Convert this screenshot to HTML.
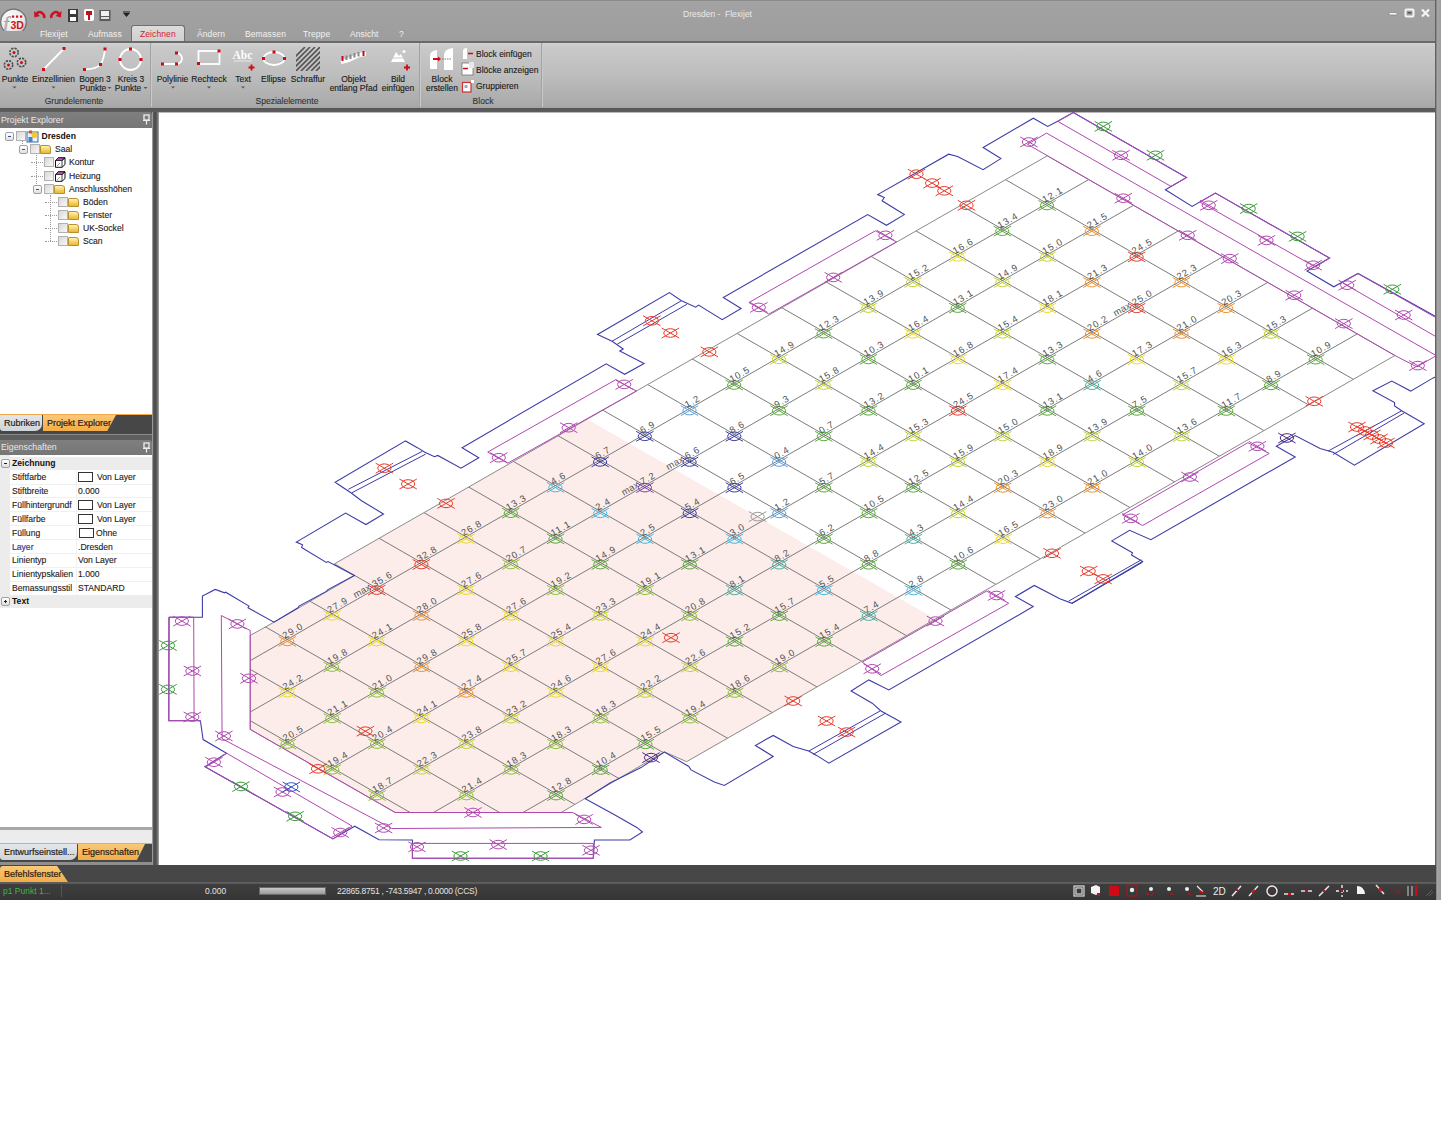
<!DOCTYPE html>
<html><head><meta charset="utf-8">
<style>
*{margin:0;padding:0;box-sizing:border-box}
html,body{width:1441px;height:1136px;background:#fff;overflow:hidden;font-family:"Liberation Sans",sans-serif}
.a{position:absolute}
#frame{left:0;top:0;width:1441px;height:900px;background:#a0a0a0}
#titlebar{left:0;top:0;width:1441px;height:41px;background:linear-gradient(#a3a3a3,#9d9d9d);border-top:1px solid #8a8a8a}
.tab{top:29px;font-size:9px;color:#f2f2f2;letter-spacing:0.1px}
#ribbon{left:0;top:41px;width:1436px;height:67px;background:linear-gradient(#d2d2d2 0,#c9c9c9 6%,#bdbdbd 50%,#aaaaaa 95%,#a4a4a4 100%);border-top:2px solid #6a6a6a}
#ribbonbot{left:0;top:108px;width:1436px;height:4px;background:linear-gradient(#555,#5e5e5e)}
.rl{font-size:9px;color:#1a1a1a;-webkit-text-stroke:0.12px #1a1a1a;text-align:center;line-height:10px}
.gl{font-size:9px;color:#333;top:96px}
.sep{top:43px;width:2px;height:64px;background:linear-gradient(90deg,#8e8e8e,#dedede)}
#rightedge{left:1435px;top:0;width:6px;height:900px;background:linear-gradient(90deg,#5c5c5c 0,#6a6a6a 1px,#a6a6a6 2px,#9c9c9c 100%)}
#splitter{left:152px;top:112px;width:7px;height:753px;background:linear-gradient(90deg,#b8b8b8 0,#5c5c5c 20%,#4a4a4a 42%,#545454 60%,#6c6c6c 75%,#a8a8a8 100%)}
#canvas{left:159px;top:112px;width:1276px;height:753px;background:linear-gradient(#9a9a9a 0,#d8d8d8 1px,#fff 1.5px);overflow:hidden}
.ph{left:0;width:152px;height:16px;background:linear-gradient(#7f7f7f,#767676);color:#e8e8e8;font-size:8.8px;line-height:16px;padding-left:1px}
.tree{font-size:9px;color:#222;line-height:13px}
.prop{font-size:9px;color:#222}
#cmdbar{left:0;top:865px;width:1436px;height:18px;background:#474747}
#status{left:0;top:883px;width:1436px;height:17px;background:linear-gradient(#3e3e3e,#353535);border-top:1px solid #5a5a5a}
.otab{height:16px;font-size:9px;color:#2a2015;-webkit-text-stroke:0.2px #2a2015;line-height:16px;padding-left:4px}
</style></head><body>
<div class="a" id="frame"></div>
<div class="a" id="titlebar"></div>

<!-- TOP BAR -->
<div class="a" style="left:0;top:1px;width:28px;height:30px">
<svg width="28" height="30" style="position:absolute;left:0;top:0">
<defs><radialGradient id="lg" cx="40%" cy="35%" r="70%"><stop offset="0" stop-color="#ffffff"/><stop offset="0.7" stop-color="#e8e8e8"/><stop offset="1" stop-color="#b8b8b8"/></radialGradient></defs>
<circle cx="13.5" cy="21" r="12.8" fill="url(#lg)" stroke="#6f6f6f" stroke-width="1.2"/>
<text x="3.5" y="29" font-family="Liberation Serif" font-style="italic" font-size="19" fill="#bdbdbd" stroke="#888" stroke-width="0.4">f</text>
<text x="10.5" y="28" font-family="Liberation Sans" font-weight="bold" font-size="10.5" fill="#d01020">3D</text>
<rect x="12" y="14.5" width="2.2" height="2.2" fill="#d01020"/><rect x="16" y="14.5" width="2.2" height="2.2" fill="#d01020"/><rect x="20" y="14.5" width="2.2" height="2.2" fill="#d01020"/>
</svg></div>
<svg class="a" style="left:30px;top:5px" width="110" height="20">
<path d="M5.5 11 Q8 5 12 8 Q15 10 14 13" fill="none" stroke="#d01020" stroke-width="2.6"/><path d="M4 6 L4.5 12.5 L10 11 Z" fill="#d01020"/>
<path d="M30 11 Q27.5 5 23.5 8 Q20.5 10 21.5 13" fill="none" stroke="#d01020" stroke-width="2.6"/><path d="M31.5 6 L31 12.5 L25.5 11 Z" fill="#d01020"/>
<rect x="38" y="4" width="10" height="13" fill="#3a3a3a"/><rect x="40" y="5" width="6" height="4" fill="#fff"/><rect x="40" y="12" width="6" height="4" fill="#fff"/>
<rect x="54" y="4" width="10" height="12" rx="2" fill="#fff"/><path d="M56 6 h6 v4 h-2 v5 h-2 v-5 h-2z" fill="#c01020"/>
<rect x="69.5" y="5" width="11" height="11" fill="#5a5a5a"/><rect x="71" y="6" width="8" height="5" fill="#f0f0f0"/><rect x="71" y="12" width="8" height="2" fill="#e0e0e0"/>
<path d="M93 8 h7 l-3.5 4z" fill="#222"/><rect x="93" y="6.5" width="7" height="1" fill="#222"/>
</svg>
<div class="a" style="left:131px;top:25px;width:54px;height:17px;background:linear-gradient(#dcdcdc,#cfcfcf);border:1px solid #707070;border-bottom:none;border-radius:3px 3px 0 0"></div>
<div class="a tab" style="left:40px;width:28px;font-size:8.5px">Flexijet</div>
<div class="a tab" style="left:88px;width:32px;font-size:8.5px">Aufmass</div>
<div class="a tab" style="left:140px;font-size:8.5px;color:#d42030">Zeichnen</div>
<div class="a tab" style="left:197px;font-size:8.5px">Ändern</div>
<div class="a tab" style="left:245px;font-size:8.5px">Bemassen</div>
<div class="a tab" style="left:303px;font-size:8.5px">Treppe</div>
<div class="a tab" style="left:350px;font-size:8.5px">Ansicht</div>
<div class="a tab" style="left:399px;font-size:8.5px">?</div>
<div class="a" style="left:683px;top:9px;font-size:8.5px;color:#eaeaea;white-space:pre">Dresden -  Flexijet</div>
<svg class="a" style="left:1385px;top:6px" width="50" height="14">
<rect x="4" y="6.5" width="8" height="2.5" rx="1" fill="#f4f4f4" stroke="#777" stroke-width="0.6"/>
<rect x="20.5" y="3.5" width="8" height="7" rx="1" fill="none" stroke="#f4f4f4" stroke-width="2"/><rect x="22.5" y="6" width="4" height="1.5" fill="#555"/>
<path d="M37 3.5 L44 10.5 M44 3.5 L37 10.5" stroke="#f4f4f4" stroke-width="2.2"/>
</svg>
<div class="a" id="ribbon"></div>

<!-- RIBBON CONTENT -->
<svg class="a" style="left:0;top:41px" width="560" height="67" viewBox="0 41 560 67">
<defs>
<g id="tgt"><circle r="4.2" fill="none" stroke="#4a4a4a" stroke-width="1.6" stroke-dasharray="2.2 1.1"/><circle r="1.5" fill="#d00a14"/></g>
</defs>
<use href="#tgt" x="14" y="52.5"/><use href="#tgt" x="8.5" y="65"/><use href="#tgt" x="21.5" y="62.5"/>
<path d="M43.5 69.5 L64 48.5" stroke="#fff" stroke-width="1.8"/>
<rect x="42" y="68" width="3" height="3" fill="#d00a14"/><rect x="62.5" y="47" width="3" height="3" fill="#d00a14"/>
<path d="M84.5 69.5 Q97 69 100.5 64.5 Q104 59 105 49" fill="none" stroke="#fff" stroke-width="1.8"/>
<rect x="83" y="68" width="3" height="3" fill="#d00a14"/><rect x="99" y="63" width="3" height="3" fill="#d00a14"/><rect x="103.5" y="47.5" width="3" height="3" fill="#d00a14"/>
<circle cx="130.5" cy="59.5" r="10.5" fill="none" stroke="#fff" stroke-width="1.8"/>
<rect x="129" y="47.5" width="3" height="3" fill="#d00a14"/><rect x="118.5" y="58" width="3" height="3" fill="#d00a14"/><rect x="139.5" y="58" width="3" height="3" fill="#d00a14"/>
<path d="M162.5 64 L176.5 64 A5.5 5.5 0 0 0 176.5 53" fill="none" stroke="#fff" stroke-width="1.8"/>
<rect x="161" y="62.5" width="3" height="3" fill="#d00a14"/><rect x="175" y="62.5" width="3" height="3" fill="#d00a14"/><rect x="175" y="51.5" width="3" height="3" fill="#d00a14"/>
<rect x="198.5" y="51" width="21" height="13" fill="none" stroke="#fff" stroke-width="1.8"/>
<rect x="197" y="62" width="3" height="3" fill="#d00a14"/><rect x="217.5" y="49.5" width="3" height="3" fill="#d00a14"/>
<text x="232.5" y="58.5" font-family="Liberation Serif" font-weight="bold" font-size="11.5" fill="#fdfdfd">Abc</text>
<rect x="234" y="60.5" width="18" height="1" fill="#e8e8e8"/>
<path d="M251.5 64.5 v6 M248.5 67.5 h6" stroke="#d00a14" stroke-width="1.8"/>
<ellipse cx="274" cy="58.5" rx="10.5" ry="6.5" fill="none" stroke="#fff" stroke-width="1.8"/>
<rect x="262" y="57" width="3" height="3" fill="#d00a14"/><rect x="272.5" y="50.5" width="3" height="3" fill="#d00a14"/><rect x="283" y="57" width="3" height="3" fill="#d00a14"/>
<clipPath id="hc"><rect x="296" y="47" width="24" height="24"/></clipPath>
<g clip-path="url(#hc)" stroke="#555" stroke-width="1.6">
<path d="M286 71 L310 47 M291 71 L315 47 M296 71 L320 47 M301 71 L325 47 M306 71 L330 47 M311 71 L335 47 M316 71 L340 47 M281 71 L305 47"/></g>
<path d="M341 62 Q350 60 355 57 Q360 54 366 54" fill="none" stroke="#fff" stroke-width="4"/>
<rect x="341.5" y="56" width="2" height="5" fill="#d00a14"/><rect x="345.5" y="55.5" width="2" height="4.5" fill="#888"/><rect x="349.5" y="54.5" width="2" height="4.5" fill="#888"/><rect x="353.5" y="53" width="2" height="4.5" fill="#888"/><rect x="357.5" y="52" width="2" height="4.5" fill="#888"/><rect x="362.5" y="51" width="2" height="5" fill="#d00a14"/>
<path d="M391 62 L396 52 L399 56 L401 54 L405 62 Z" fill="#fff"/><circle cx="404" cy="51.5" r="1.5" fill="#fff"/><rect x="392" y="57.5" width="12" height="1" fill="#ccc"/>
<path d="M407 64.5 v6 M404 67.5 h6" stroke="#d00a14" stroke-width="1.8"/>
<path d="M430 69 V56 Q430 51 437 50 V69 Z" fill="#fff"/><path d="M444 70 V55 Q444 49 453 48 V70 Z" fill="#fff"/>
<path d="M433 59 h6" stroke="#d00a14" stroke-width="2"/><path d="M438 56.5 l3 2.5 l-3 2.5z" fill="#d00a14"/><path d="M442 59 h10" stroke="#777" stroke-width="1" stroke-dasharray="1.5 1"/>
<path d="M463 59 V51 Q463 48 467 48 V59 Z" fill="#fff"/><path d="M468 53.5 h5" stroke="#d00a14" stroke-width="1.5"/>
<rect x="462" y="63" width="11" height="12" fill="#fff" stroke="#666" stroke-width="0.7"/><path d="M463 68.5 h5" stroke="#d00a14" stroke-width="1.5"/><rect x="469" y="62" width="5" height="6" fill="#e8e8e8"/>
<rect x="462.5" y="82.5" width="8.5" height="9.5" fill="#fff" stroke="#d03030" stroke-width="1.2"/><rect x="464.5" y="85" width="3" height="3" fill="#9ab"/><rect x="471" y="80" width="3" height="3" fill="#fff"/>
</svg>
<div class="a rl" style="left:0;top:73.5px;width:30px;font-size:8.5px">Punkte</div>
<div class="a rl" style="left:28px;top:73.5px;width:51px;font-size:8.5px">Einzellinien</div>
<div class="a rl" style="left:75px;top:73.5px;width:40px;font-size:8.5px">Bogen 3</div>
<div class="a rl" style="left:73px;top:83px;width:40px;font-size:8.5px">Punkte</div>
<div class="a rl" style="left:114px;top:73.5px;width:34px;font-size:8.5px">Kreis 3</div>
<div class="a rl" style="left:111px;top:83px;width:34px;font-size:8.5px">Punkte</div>
<div class="a rl" style="left:152px;top:73.5px;width:41px;font-size:8.5px">Polylinie</div>
<div class="a rl" style="left:189px;top:73.5px;width:40px;font-size:8.5px">Rechteck</div>
<div class="a rl" style="left:228px;top:73.5px;width:30px;font-size:8.5px">Text</div>
<div class="a rl" style="left:256px;top:73.5px;width:35px;font-size:8.5px">Ellipse</div>
<div class="a rl" style="left:288px;top:73.5px;width:40px;font-size:8.5px">Schraffur</div>
<div class="a rl" style="left:323px;top:73.5px;width:61px;font-size:8.5px">Objekt</div>
<div class="a rl" style="left:323px;top:83px;width:61px;font-size:8.5px">entlang Pfad</div>
<div class="a rl" style="left:378px;top:73.5px;width:40px;font-size:8.5px">Bild</div>
<div class="a rl" style="left:378px;top:83px;width:40px;font-size:8.5px">einfügen</div>
<div class="a rl" style="left:422px;top:73.5px;width:40px;font-size:8.5px">Block</div>
<div class="a rl" style="left:422px;top:83px;width:40px;font-size:8.5px">erstellen</div>
<div class="a rl" style="left:476px;top:48.5px;font-size:8.5px">Block einfügen</div>
<div class="a rl" style="left:476px;top:64.5px;font-size:8.5px">Blöcke anzeigen</div>
<div class="a rl" style="left:476px;top:80.5px;font-size:8.5px">Gruppieren</div>
<div class="a rl" style="left:34px;top:95.5px;width:80px;font-size:8.5px;color:#3a3a3a">Grundelemente</div>
<div class="a rl" style="left:237px;top:95.5px;width:100px;font-size:8.5px;color:#3a3a3a">Spezialelemente</div>
<div class="a rl" style="left:463px;top:95.5px;width:40px;font-size:8.5px;color:#3a3a3a">Block</div>
<svg class="a" style="left:0;top:84px" width="160" height="8">
<path d="M12.5 2.5 h4 l-2 2z M51.5 2.5 h4 l-2 2z M107.5 3 h4 l-2 2z M143.5 3 h4 l-2 2z" fill="#555"/>
</svg>
<svg class="a" style="left:150px;top:84px" width="100" height="8">
<path d="M21 2.5 h4 l-2 2z M57 2.5 h4 l-2 2z M91 2.5 h4 l-2 2z" fill="#555"/>
</svg>
<div class="a sep" style="left:150px"></div>
<div class="a sep" style="left:418.5px"></div>
<div class="a sep" style="left:541px"></div>
<div class="a" id="ribbonbot"></div>
<div class="a" id="rightedge"></div>

<!-- LEFT PANEL: Projekt Explorer -->
<div class="a" style="left:0;top:112px;width:152px;height:753px;background:#5a5a5a"></div>
<div class="a ph" style="top:112px;height:16px;border-radius:0 3px 0 0">Projekt Explorer</div>
<svg class="a" style="left:142px;top:114px" width="9" height="11"><rect x="2" y="1" width="5" height="5" fill="none" stroke="#eee" stroke-width="1.3"/><path d="M1 6.5 h7 M4.5 6.5 v4" stroke="#eee" stroke-width="1.2"/></svg>
<div class="a" style="left:0;top:128px;width:152px;height:286px;background:#fff"></div>
<div class="a" style="left:22px;top:141px;width:1px;height:7px;border-left:1px dotted #999"></div>
<div class="a" style="left:36px;top:155px;width:1px;height:33px;border-left:1px dotted #999"></div>
<div class="a" style="left:50px;top:195px;width:1px;height:46px;border-left:1px dotted #999"></div>
<div class="a" style="left:4.6px;top:131.7px;width:9px;height:9px;border:1px solid #a0a0a0;border-radius:2px;background:linear-gradient(#fff,#e0e0e0)"><div class="a" style="left:2px;top:3px;width:3px;height:1px;background:#3050a0"></div></div>
<div class="a" style="left:16px;top:130.7px;width:10px;height:10px;border:1px solid #b0b0b0;background:linear-gradient(135deg,#d8d8d8,#f8f8f8)"></div>
<svg class="a" style="left:26px;top:129.7px" width="13" height="13"><rect x="1" y="2" width="11" height="10" fill="#e8f0f8" stroke="#3a6aa8" stroke-width="1"/><circle cx="8.5" cy="5" r="3" fill="#f4c830"/><rect x="2.5" y="7" width="4" height="5" fill="#4a80c8"/><rect x="3" y="0.5" width="3" height="3" fill="#e84a2a"/></svg>
<div class="a" style="left:41.5px;top:129.7px;font-size:8.6px;line-height:12px;font-weight:bold;color:#111;white-space:nowrap">Dresden</div>
<div class="a" style="left:18.5px;top:145.0px;width:9px;height:9px;border:1px solid #a0a0a0;border-radius:2px;background:linear-gradient(#fff,#e0e0e0)"><div class="a" style="left:2px;top:3px;width:3px;height:1px;background:#3050a0"></div></div>
<div class="a" style="left:30px;top:144.0px;width:10px;height:10px;border:1px solid #b0b0b0;background:linear-gradient(135deg,#d8d8d8,#f8f8f8)"></div>
<div class="a" style="left:40px;top:145.0px;width:11px;height:9px;background:linear-gradient(#fff3b0,#e8b830);border:1px solid #b89030;border-radius:1px 3px 0 0"></div>
<div class="a" style="left:55px;top:143.0px;font-size:8.6px;line-height:12px;font-weight:normal;color:#222;-webkit-text-stroke:0.12px #222;white-space:nowrap">Saal</div>
<div class="a" style="left:31px;top:162.3px;width:12px;height:1px;border-top:1px dotted #999"></div>
<div class="a" style="left:44px;top:157.3px;width:10px;height:10px;border:1px solid #b0b0b0;background:linear-gradient(135deg,#d8d8d8,#f8f8f8)"></div>
<svg class="a" style="left:54.0px;top:157.3px" width="12" height="11"><path d="M1.5 3.5 L4.5 0.8 H11 V7.5 L8 10.3 H1.5 Z" fill="#fff" stroke="#111" stroke-width="1"/><path d="M1.5 3.5 L4.5 0.8 H11 L8 3.5 Z" fill="#c850b8" stroke="#111" stroke-width="0.8"/><path d="M8 3.5 V10.3 M8 3.5 L11 0.8" stroke="#111" stroke-width="0.8"/><path d="M3 9 l3 -3" stroke="#555" stroke-width="0.6"/></svg>
<div class="a" style="left:69px;top:156.3px;font-size:8.6px;line-height:12px;font-weight:normal;color:#222;-webkit-text-stroke:0.12px #222;white-space:nowrap">Kontur</div>
<div class="a" style="left:31px;top:175.5px;width:12px;height:1px;border-top:1px dotted #999"></div>
<div class="a" style="left:44px;top:170.5px;width:10px;height:10px;border:1px solid #b0b0b0;background:linear-gradient(135deg,#d8d8d8,#f8f8f8)"></div>
<svg class="a" style="left:54.0px;top:170.5px" width="12" height="11"><path d="M1.5 3.5 L4.5 0.8 H11 V7.5 L8 10.3 H1.5 Z" fill="#fff" stroke="#111" stroke-width="1"/><path d="M1.5 3.5 L4.5 0.8 H11 L8 3.5 Z" fill="#c850b8" stroke="#111" stroke-width="0.8"/><path d="M8 3.5 V10.3 M8 3.5 L11 0.8" stroke="#111" stroke-width="0.8"/><path d="M3 9 l3 -3" stroke="#555" stroke-width="0.6"/></svg>
<div class="a" style="left:69px;top:169.5px;font-size:8.6px;line-height:12px;font-weight:normal;color:#222;-webkit-text-stroke:0.12px #222;white-space:nowrap">Heizung</div>
<div class="a" style="left:32.5px;top:184.6px;width:9px;height:9px;border:1px solid #a0a0a0;border-radius:2px;background:linear-gradient(#fff,#e0e0e0)"><div class="a" style="left:2px;top:3px;width:3px;height:1px;background:#3050a0"></div></div>
<div class="a" style="left:44px;top:183.6px;width:10px;height:10px;border:1px solid #b0b0b0;background:linear-gradient(135deg,#d8d8d8,#f8f8f8)"></div>
<div class="a" style="left:54px;top:184.6px;width:11px;height:9px;background:linear-gradient(#fff3b0,#e8b830);border:1px solid #b89030;border-radius:1px 3px 0 0"></div>
<div class="a" style="left:69px;top:182.6px;font-size:8.6px;line-height:12px;font-weight:normal;color:#222;-webkit-text-stroke:0.12px #222;white-space:nowrap">Anschlusshöhen</div>
<div class="a" style="left:45px;top:201.8px;width:12px;height:1px;border-top:1px dotted #999"></div>
<div class="a" style="left:58px;top:196.8px;width:10px;height:10px;border:1px solid #b0b0b0;background:linear-gradient(135deg,#d8d8d8,#f8f8f8)"></div>
<div class="a" style="left:68px;top:197.8px;width:11px;height:9px;background:linear-gradient(#fff3b0,#e8b830);border:1px solid #b89030;border-radius:1px 3px 0 0"></div>
<div class="a" style="left:83px;top:195.8px;font-size:8.6px;line-height:12px;font-weight:normal;color:#222;-webkit-text-stroke:0.12px #222;white-space:nowrap">Böden</div>
<div class="a" style="left:45px;top:215.0px;width:12px;height:1px;border-top:1px dotted #999"></div>
<div class="a" style="left:58px;top:210.0px;width:10px;height:10px;border:1px solid #b0b0b0;background:linear-gradient(135deg,#d8d8d8,#f8f8f8)"></div>
<div class="a" style="left:68px;top:211.0px;width:11px;height:9px;background:linear-gradient(#fff3b0,#e8b830);border:1px solid #b89030;border-radius:1px 3px 0 0"></div>
<div class="a" style="left:83px;top:209.0px;font-size:8.6px;line-height:12px;font-weight:normal;color:#222;-webkit-text-stroke:0.12px #222;white-space:nowrap">Fenster</div>
<div class="a" style="left:45px;top:228.2px;width:12px;height:1px;border-top:1px dotted #999"></div>
<div class="a" style="left:58px;top:223.2px;width:10px;height:10px;border:1px solid #b0b0b0;background:linear-gradient(135deg,#d8d8d8,#f8f8f8)"></div>
<div class="a" style="left:68px;top:224.2px;width:11px;height:9px;background:linear-gradient(#fff3b0,#e8b830);border:1px solid #b89030;border-radius:1px 3px 0 0"></div>
<div class="a" style="left:83px;top:222.2px;font-size:8.6px;line-height:12px;font-weight:normal;color:#222;-webkit-text-stroke:0.12px #222;white-space:nowrap">UK-Sockel</div>
<div class="a" style="left:45px;top:241.4px;width:12px;height:1px;border-top:1px dotted #999"></div>
<div class="a" style="left:58px;top:236.4px;width:10px;height:10px;border:1px solid #b0b0b0;background:linear-gradient(135deg,#d8d8d8,#f8f8f8)"></div>
<div class="a" style="left:68px;top:237.4px;width:11px;height:9px;background:linear-gradient(#fff3b0,#e8b830);border:1px solid #b89030;border-radius:1px 3px 0 0"></div>
<div class="a" style="left:83px;top:235.4px;font-size:8.6px;line-height:12px;font-weight:normal;color:#222;-webkit-text-stroke:0.12px #222;white-space:nowrap">Scan</div>
<!-- tabs -->
<div class="a" style="left:0;top:414px;width:152px;height:20px;background:#474747;border-top:1px solid #f0a848"></div>
<div class="a otab" style="left:0;top:415px;width:42px;background:linear-gradient(#e4e7ea,#cfd4d9);border-radius:0 0 7px 3px">Rubriken</div>
<div class="a otab" style="left:43px;top:415px;width:73px;background:linear-gradient(#fbc979,#f2ac48);border-radius:0 0 7px 0;clip-path:polygon(0 0,100% 0,88% 100%,0 100%)">Projekt Explorer</div>
<div class="a" style="left:0;top:434px;width:152px;height:6px;background:#5e5e5e;border-top:1px solid #8a8a8a"></div>
<!-- Eigenschaften -->
<div class="a ph" style="top:440px;height:15px;line-height:15px;border-radius:0 3px 0 0">Eigenschaften</div><svg class="a" style="left:142px;top:442px" width="9" height="11"><rect x="2" y="1" width="5" height="5" fill="none" stroke="#eee" stroke-width="1.3"/><path d="M1 6.5 h7 M4.5 6.5 v4" stroke="#eee" stroke-width="1.2"/></svg>
<div class="a" style="left:0;top:455px;width:152px;height:375px;background:#fff"></div>
<div class="a" style="left:0;top:455px;width:10px;height:153px;background:#ececec"></div>
<div class="a" style="left:0;top:457px;width:152px;height:13px;background:#ececec"></div>
<div class="a" style="left:1px;top:459px;width:9px;height:9px;border:1px solid #a0a0a0;border-radius:2px;background:linear-gradient(#fff,#ddd)"><div class="a" style="left:2px;top:3px;width:3px;height:1px;background:#222"></div></div>
<div class="a" style="left:12px;top:457px;font-size:8.6px;line-height:12px;font-weight:bold;color:#111">Zeichnung</div>
<div class="a" style="left:10px;top:483.5px;width:142px;height:1px;background:#f0f0f0"></div>
<div class="a" style="left:12px;top:471.0px;width:63px;overflow:hidden;font-size:8.6px;line-height:12px;color:#222;-webkit-text-stroke:0.12px #222;white-space:nowrap">Stiftfarbe</div>
<div class="a" style="left:77.5px;top:472.0px;width:15px;height:10px;border:1px solid #333;background:#fff"></div>
<div class="a" style="left:97px;top:471.0px;font-size:8.6px;line-height:12px;color:#222;-webkit-text-stroke:0.12px #222;white-space:nowrap">Von Layer</div>
<div class="a" style="left:10px;top:497.4px;width:142px;height:1px;background:#f0f0f0"></div>
<div class="a" style="left:12px;top:484.9px;width:63px;overflow:hidden;font-size:8.6px;line-height:12px;color:#222;-webkit-text-stroke:0.12px #222;white-space:nowrap">Stiftbreite</div>
<div class="a" style="left:78px;top:484.9px;font-size:8.6px;line-height:12px;color:#222;-webkit-text-stroke:0.12px #222;white-space:nowrap">0.000</div>
<div class="a" style="left:10px;top:511.3px;width:142px;height:1px;background:#f0f0f0"></div>
<div class="a" style="left:12px;top:498.8px;width:63px;overflow:hidden;font-size:8.6px;line-height:12px;color:#222;-webkit-text-stroke:0.12px #222;white-space:nowrap">Füllhintergrundf</div>
<div class="a" style="left:77.5px;top:499.8px;width:15px;height:10px;border:1px solid #333;background:#fff"></div>
<div class="a" style="left:97px;top:498.8px;font-size:8.6px;line-height:12px;color:#222;-webkit-text-stroke:0.12px #222;white-space:nowrap">Von Layer</div>
<div class="a" style="left:10px;top:525.2px;width:142px;height:1px;background:#f0f0f0"></div>
<div class="a" style="left:12px;top:512.7px;width:63px;overflow:hidden;font-size:8.6px;line-height:12px;color:#222;-webkit-text-stroke:0.12px #222;white-space:nowrap">Füllfarbe</div>
<div class="a" style="left:77.5px;top:513.7px;width:15px;height:10px;border:1px solid #333;background:#fff"></div>
<div class="a" style="left:97px;top:512.7px;font-size:8.6px;line-height:12px;color:#222;-webkit-text-stroke:0.12px #222;white-space:nowrap">Von Layer</div>
<div class="a" style="left:10px;top:539.1px;width:142px;height:1px;background:#f0f0f0"></div>
<div class="a" style="left:12px;top:526.6px;width:63px;overflow:hidden;font-size:8.6px;line-height:12px;color:#222;-webkit-text-stroke:0.12px #222;white-space:nowrap">Füllung</div>
<div class="a" style="left:79px;top:527.6px;width:15px;height:10px;border:1px solid #333;background:#fff"></div>
<div class="a" style="left:96px;top:526.6px;font-size:8.6px;line-height:12px;color:#222;-webkit-text-stroke:0.12px #222;white-space:nowrap">Ohne</div>
<div class="a" style="left:10px;top:553.0px;width:142px;height:1px;background:#f0f0f0"></div>
<div class="a" style="left:12px;top:540.5px;width:63px;overflow:hidden;font-size:8.6px;line-height:12px;color:#3a3a90;-webkit-text-stroke:0.2px #3a3a90;white-space:nowrap">Layer</div>
<div class="a" style="left:78px;top:540.5px;font-size:8.6px;line-height:12px;color:#222;-webkit-text-stroke:0.12px #222;white-space:nowrap">.Dresden</div>
<div class="a" style="left:10px;top:566.9px;width:142px;height:1px;background:#f0f0f0"></div>
<div class="a" style="left:12px;top:554.4px;width:63px;overflow:hidden;font-size:8.6px;line-height:12px;color:#222;-webkit-text-stroke:0.12px #222;white-space:nowrap">Linientyp</div>
<div class="a" style="left:78px;top:554.4px;font-size:8.6px;line-height:12px;color:#222;-webkit-text-stroke:0.12px #222;white-space:nowrap">Von Layer</div>
<div class="a" style="left:10px;top:580.8px;width:142px;height:1px;background:#f0f0f0"></div>
<div class="a" style="left:12px;top:568.3px;width:63px;overflow:hidden;font-size:8.6px;line-height:12px;color:#222;-webkit-text-stroke:0.12px #222;white-space:nowrap">Linientypskalien</div>
<div class="a" style="left:78px;top:568.3px;font-size:8.6px;line-height:12px;color:#222;-webkit-text-stroke:0.12px #222;white-space:nowrap">1.000</div>
<div class="a" style="left:10px;top:594.7px;width:142px;height:1px;background:#f0f0f0"></div>
<div class="a" style="left:12px;top:582.2px;width:63px;overflow:hidden;font-size:8.6px;line-height:12px;color:#222;-webkit-text-stroke:0.12px #222;white-space:nowrap">Bemassungsstil</div>
<div class="a" style="left:78px;top:582.2px;font-size:8.6px;line-height:12px;color:#222;-webkit-text-stroke:0.12px #222;white-space:nowrap">STANDARD</div>
<div class="a" style="left:76px;top:470px;width:1px;height:125px;background:#f2f2f2"></div>
<div class="a" style="left:0;top:595px;width:152px;height:13px;background:#ececec"></div>
<div class="a" style="left:1px;top:597px;width:9px;height:9px;border:1px solid #a0a0a0;border-radius:2px;background:linear-gradient(#fff,#ddd)"><div class="a" style="left:2px;top:3px;width:3px;height:1px;background:#222"></div><div class="a" style="left:3px;top:2px;width:1px;height:3px;background:#222"></div></div>
<div class="a" style="left:12px;top:595px;font-size:8.6px;line-height:12px;font-weight:bold;color:#111">Text</div>
<div class="a" style="left:0;top:827px;width:152px;height:3px;background:#a8a8a8"></div>
<div class="a" style="left:0;top:830px;width:152px;height:13px;background:#ececec"></div>
<div class="a" style="left:0;top:843px;width:152px;height:20px;background:#474747;border-top:1px solid #f0a848"></div>
<div class="a otab" style="left:0;top:844px;width:77px;background:linear-gradient(#e4e7ea,#cfd4d9);border-radius:0 0 7px 3px">Entwurfseinstell...</div>
<div class="a otab" style="left:78px;top:844px;width:67px;background:linear-gradient(#fbc979,#f2ac48);clip-path:polygon(0 0,100% 0,88% 100%,0 100%)">Eigenschaften</div>
<div class="a" style="left:0;top:862px;width:152px;height:3px;background:#8e8e8e"></div>
<div class="a" id="splitter"></div>
<div class="a" id="canvas"><svg class="a" style="left:0;top:0" width="1276" height="753" viewBox="159 112 1276 753">
<defs><clipPath id="gc"><polygon points="250.2,635.5 274.0,622.2 354.4,575.6 334.2,564.0 1047.3,155.8 1394.9,355.5 686.6,761.7 664.3,751.8 561.2,812.5 395.2,812.5 250.2,729.4"/></clipPath></defs>
<polygon points="250.2,635.5 274.0,622.2 354.4,575.6 334.2,564.0 587.6,419.4 935.5,619.1 686.6,761.7 664.3,751.8 561.2,812.5 395.2,812.5 250.2,729.4" fill="#fcecea"/>
<g clip-path="url(#gc)"><path d="M-70.4 741.8L1046.8 100.8M-25.6 767.5L1091.6 126.5M19.2 793.2L1136.4 152.2M63.9 818.9L1181.2 177.9M108.7 844.6L1226.0 203.6M153.5 870.3L1270.7 229.3M198.3 896.0L1315.5 255.0M243.1 921.7L1360.3 280.7M287.8 947.4L1405.1 306.4M332.6 973.1L1449.9 332.1M377.4 998.8L1494.6 357.8M-115.1 767.5L377.5 1050.2M-70.4 741.8L422.2 1024.5M-25.7 716.2L466.9 998.9M19.0 690.6L511.6 973.3M63.7 664.9L556.2 947.6M108.4 639.3L600.9 922.0M153.1 613.6L645.6 896.3M197.7 588.0L690.3 870.7M242.4 562.4L735.0 845.1M287.1 536.7L779.7 819.4M331.8 511.1L824.4 793.8M376.5 485.4L869.1 768.1M421.2 459.8L913.8 742.5M465.9 434.2L958.5 716.9M510.6 408.5L1003.1 691.2M555.3 382.9L1047.8 665.6M600.0 357.2L1092.5 639.9M644.6 331.6L1137.2 614.3M689.3 306.0L1181.9 588.7M734.0 280.3L1226.6 563.0M778.7 254.7L1271.3 537.4M823.4 229.0L1316.0 511.7M868.1 203.4L1360.7 486.1M912.8 177.8L1405.4 460.5M957.5 152.1L1450.0 434.8M1002.2 126.5L1494.7 409.2" stroke="#7c7c7c" stroke-width="1" fill="none"/></g>
<polygon points="250.2,635.5 274.0,622.2 354.4,575.6 334.2,564.0 1047.3,155.8 1394.9,355.5 686.6,761.7 664.3,751.8 561.2,812.5 395.2,812.5 250.2,729.4" fill="none" stroke="#8a8a8a" stroke-width="1"/>
<polyline points="169.1,617.2 202.4,617.2 202.4,596.1 215.2,589.4 224.6,592.8 225.7,592.2 249.0,606.1 248.0,607.8 274.0,622.2 298.0,607.8 299.0,606.1 326.3,591.4 328.0,589.6 354.4,575.6 328.0,561.5 326.3,562.4 301.6,547.4 302.5,544.8 296.3,542.1 345.6,513.1 365.9,524.5 383.5,514.0 361.5,500.7 350.9,492.8 335.1,482.3 405.5,440.9 417.8,447.9 424.9,452.3 434.5,456.7 437.7,455.4 461.0,468.2 478.8,457.7 462.1,447.7 606.2,363.8 624.7,374.3 644.1,363.6 619.8,350.9 623.2,349.0 612.1,341.2 597.5,334.4 669.4,292.6 681.1,300.4 695.6,307.2 698.6,305.1 722.2,319.6 741.1,308.5 723.3,297.4 867.7,214.6 886.5,225.3 904.3,214.6 882.1,200.8 884.3,197.5 877.7,194.6 948.7,154.2 957.6,156.4 983.1,169.7 1000.9,158.6 983.1,147.5 1033.3,118.2 1047.7,126.4 1057.7,121.3 1073.3,112.5 1186.5,177.5 1165.4,189.7 1192.1,206.4 1215.4,193.1 1329.6,258.1 1307.0,270.9 1333.8,286.8 1358.0,273.5 1440.0,318.8 1440.0,374.6 1433.2,377.9 1410.7,391.1 1391.8,381.0 1372.9,390.7 1394.6,402.5 1394.6,406.0 1401.7,410.8 1424.2,423.8 1354.4,465.2 1333.1,452.2 1320.1,448.6 1295.2,435.6 1276.3,446.3 1295.2,456.9 1150.9,539.7 1129.6,530.3 1111.8,540.9 1132.5,552.8 1131.5,555.0 1142.6,561.4 1072.0,603.3 1059.8,598.8 1034.3,585.5 1015.4,596.6 1033.2,606.6 888.8,689.9 868.8,679.9 851.1,691.0 872.2,703.2 881.0,711.0 901.0,722.1 828.9,763.2 816.6,755.4 808.7,751.0 793.2,746.5 773.2,735.4 755.4,745.4 773.2,756.5 724.3,785.4 714.3,782.1 691.0,769.9 688.8,766.5 664.4,752.1 641.0,767.6 610.4,782.7 585.2,798.8 612.7,813.7 636.8,827.4 642.5,832.0 629.9,840.0 594.4,840.0 593.3,858.3 412.4,858.3 412.4,840.0 379.0,839.8 354.7,826.2 333.0,838.9 204.9,766.7 226.6,753.2 203.1,739.6 200.4,720.7 168.8,720.7 169.1,617.2" fill="none" stroke="#3c3ca8" stroke-width="1.1"/>
<polygon points="168.8,617.2 193.7,617.2 194.1,720.7 168.8,720.7" fill="none" stroke="#b048b0" stroke-width="1"/>
<polygon points="221.3,615.5 250.2,630.5 250.2,729.4 395.2,812.5 572.7,812.5 601.3,827.4 391.8,828.5 222.1,738.7" fill="none" stroke="#b048b0" stroke-width="1"/>
<polygon points="205.0,766.7 226.6,753.2 352.0,826.0 333.0,838.9" fill="none" stroke="#b048b0" stroke-width="1"/>
<polygon points="412.4,843.4 593.3,843.4 593.3,858.3 412.4,858.3" fill="none" stroke="#b048b0" stroke-width="1"/>
<polygon points="487.7,452.1 615.4,379.9 636.5,391.0 507.7,463.2" fill="none" stroke="#b048b0" stroke-width="1"/>
<polygon points="748.9,302.5 875.4,230.8 896.5,241.9 768.8,314.1" fill="none" stroke="#b048b0" stroke-width="1"/>
<polygon points="1057.7,121.3 1073.3,112.5 1186.5,177.5 1171.0,186.4" fill="none" stroke="#b048b0" stroke-width="1"/>
<polygon points="1027.5,144.3 1046.6,133.1 1440.0,357.8 1440.0,353.5 1416.9,366.9 1394.9,355.5" fill="none" stroke="#b048b0" stroke-width="1"/>
<polygon points="1199.9,202.0 1215.4,193.1 1329.6,258.1 1315.4,267.0" fill="none" stroke="#b048b0" stroke-width="1"/>
<polygon points="1342.2,282.6 1358.0,273.5 1440.0,320.0 1440.0,339.0" fill="none" stroke="#b048b0" stroke-width="1"/>
<polygon points="1122.5,514.9 1247.9,442.7 1269.2,453.4 1142.6,525.5" fill="none" stroke="#b048b0" stroke-width="1"/>
<polygon points="862.2,662.1 986.5,591.1 1008.7,603.3 881.0,675.5" fill="none" stroke="#b048b0" stroke-width="1"/>
<path d="M348.3 489.3L422.2 451.4" stroke="#3c3ca8" stroke-width="1"/>
<path d="M351.8 492.8L425.7 454.1" stroke="#3c3ca8" stroke-width="1"/>
<path d="M612.1 341.2L681.1 300.9" stroke="#3c3ca8" stroke-width="1"/>
<path d="M617.4 344.1L686.9 304.3" stroke="#3c3ca8" stroke-width="1"/>
<path d="M1328.3 451.0L1401.7 410.8" stroke="#3c3ca8" stroke-width="1"/>
<path d="M1333.1 454.5L1404.0 413.1" stroke="#3c3ca8" stroke-width="1"/>
<path d="M1068.7 601.1L1141.4 559.8" stroke="#3c3ca8" stroke-width="1"/>
<path d="M1072.0 603.3L1142.6 562.2" stroke="#3c3ca8" stroke-width="1"/>
<path d="M808.9 751.0L880.0 711.0" stroke="#3c3ca8" stroke-width="1"/>
<path d="M813.3 754.3L885.5 713.2" stroke="#3c3ca8" stroke-width="1"/>
<ellipse cx="287.3" cy="641.4" rx="6.6" ry="4.3" fill="none" stroke="#f0902a" stroke-width="1"/><path d="M278.6 646.4L296.0 636.4M278.6 636.4L296.0 646.4" stroke="#f0902a" stroke-width="1"/>
<ellipse cx="332.0" cy="615.8" rx="6.6" ry="4.3" fill="none" stroke="#e8dc28" stroke-width="1"/><path d="M323.3 620.7L340.7 610.8M323.3 610.8L340.7 620.7" stroke="#e8dc28" stroke-width="1"/>
<ellipse cx="376.7" cy="590.1" rx="6.6" ry="4.3" fill="none" stroke="#e83a2a" stroke-width="1"/><path d="M368.0 595.1L385.4 585.1M368.0 585.1L385.4 595.1" stroke="#e83a2a" stroke-width="1"/>
<ellipse cx="421.4" cy="564.5" rx="6.6" ry="4.3" fill="none" stroke="#e83a2a" stroke-width="1"/><path d="M412.7 569.5L430.0 559.5M412.7 559.5L430.0 569.5" stroke="#e83a2a" stroke-width="1"/>
<ellipse cx="466.1" cy="538.8" rx="6.6" ry="4.3" fill="none" stroke="#e8dc28" stroke-width="1"/><path d="M457.4 543.8L474.7 533.9M457.4 533.9L474.7 543.8" stroke="#e8dc28" stroke-width="1"/>
<ellipse cx="510.8" cy="513.2" rx="6.6" ry="4.3" fill="none" stroke="#5aa83a" stroke-width="1"/><path d="M502.1 518.2L519.4 508.2M502.1 508.2L519.4 518.2" stroke="#5aa83a" stroke-width="1"/>
<ellipse cx="555.4" cy="487.6" rx="6.6" ry="4.3" fill="none" stroke="#48b8e0" stroke-width="1"/><path d="M546.8 492.5L564.1 482.6M546.8 482.6L564.1 492.5" stroke="#48b8e0" stroke-width="1"/>
<ellipse cx="600.1" cy="461.9" rx="6.6" ry="4.3" fill="none" stroke="#3a3aa0" stroke-width="1"/><path d="M591.5 466.9L608.8 456.9M591.5 456.9L608.8 466.9" stroke="#3a3aa0" stroke-width="1"/>
<ellipse cx="644.8" cy="436.3" rx="6.6" ry="4.3" fill="none" stroke="#3a3aa0" stroke-width="1"/><path d="M636.1 441.3L653.5 431.3M636.1 431.3L653.5 441.3" stroke="#3a3aa0" stroke-width="1"/>
<ellipse cx="689.5" cy="410.6" rx="6.6" ry="4.3" fill="none" stroke="#5aa0e0" stroke-width="1"/><path d="M680.8 415.6L698.2 405.7M680.8 405.7L698.2 415.6" stroke="#5aa0e0" stroke-width="1"/>
<ellipse cx="734.2" cy="385.0" rx="6.6" ry="4.3" fill="none" stroke="#5aa83a" stroke-width="1"/><path d="M725.5 390.0L742.9 380.0M725.5 380.0L742.9 390.0" stroke="#5aa83a" stroke-width="1"/>
<ellipse cx="778.9" cy="359.4" rx="6.6" ry="4.3" fill="none" stroke="#c2d434" stroke-width="1"/><path d="M770.2 364.3L787.6 354.4M770.2 354.4L787.6 364.3" stroke="#c2d434" stroke-width="1"/>
<ellipse cx="823.6" cy="333.7" rx="6.6" ry="4.3" fill="none" stroke="#5aa83a" stroke-width="1"/><path d="M814.9 338.7L832.3 328.7M814.9 328.7L832.3 338.7" stroke="#5aa83a" stroke-width="1"/>
<ellipse cx="868.3" cy="308.1" rx="6.6" ry="4.3" fill="none" stroke="#c2d434" stroke-width="1"/><path d="M859.6 313.1L876.9 303.1M859.6 303.1L876.9 313.1" stroke="#c2d434" stroke-width="1"/>
<ellipse cx="913.0" cy="282.4" rx="6.6" ry="4.3" fill="none" stroke="#c2d434" stroke-width="1"/><path d="M904.3 287.4L921.6 277.5M904.3 277.5L921.6 287.4" stroke="#c2d434" stroke-width="1"/>
<ellipse cx="957.6" cy="256.8" rx="6.6" ry="4.3" fill="none" stroke="#e8dc28" stroke-width="1"/><path d="M949.0 261.8L966.3 251.8M949.0 251.8L966.3 261.8" stroke="#e8dc28" stroke-width="1"/>
<ellipse cx="1002.3" cy="231.2" rx="6.6" ry="4.3" fill="none" stroke="#5aa83a" stroke-width="1"/><path d="M993.7 236.1L1011.0 226.2M993.7 226.2L1011.0 236.1" stroke="#5aa83a" stroke-width="1"/>
<ellipse cx="1047.0" cy="205.5" rx="6.6" ry="4.3" fill="none" stroke="#5aa83a" stroke-width="1"/><path d="M1038.4 210.5L1055.7 200.5M1038.4 200.5L1055.7 210.5" stroke="#5aa83a" stroke-width="1"/>
<ellipse cx="287.4" cy="692.7" rx="6.6" ry="4.3" fill="none" stroke="#e8dc28" stroke-width="1"/><path d="M278.7 697.7L296.1 687.8M278.7 687.8L296.1 697.7" stroke="#e8dc28" stroke-width="1"/>
<ellipse cx="332.1" cy="667.1" rx="6.6" ry="4.3" fill="none" stroke="#8cc03a" stroke-width="1"/><path d="M323.4 672.1L340.8 662.1M323.4 662.1L340.8 672.1" stroke="#8cc03a" stroke-width="1"/>
<ellipse cx="376.8" cy="641.5" rx="6.6" ry="4.3" fill="none" stroke="#e8dc28" stroke-width="1"/><path d="M368.1 646.4L385.4 636.5M368.1 636.5L385.4 646.4" stroke="#e8dc28" stroke-width="1"/>
<ellipse cx="421.5" cy="615.8" rx="6.6" ry="4.3" fill="none" stroke="#f0902a" stroke-width="1"/><path d="M412.8 620.8L430.1 610.8M412.8 610.8L430.1 620.8" stroke="#f0902a" stroke-width="1"/>
<ellipse cx="466.1" cy="590.2" rx="6.6" ry="4.3" fill="none" stroke="#e8dc28" stroke-width="1"/><path d="M457.5 595.2L474.8 585.2M457.5 585.2L474.8 595.2" stroke="#e8dc28" stroke-width="1"/>
<ellipse cx="510.8" cy="564.5" rx="6.6" ry="4.3" fill="none" stroke="#8cc03a" stroke-width="1"/><path d="M502.2 569.5L519.5 559.6M502.2 559.6L519.5 569.5" stroke="#8cc03a" stroke-width="1"/>
<ellipse cx="555.5" cy="538.9" rx="6.6" ry="4.3" fill="none" stroke="#5aa83a" stroke-width="1"/><path d="M546.9 543.9L564.2 533.9M546.9 533.9L564.2 543.9" stroke="#5aa83a" stroke-width="1"/>
<ellipse cx="600.2" cy="513.3" rx="6.6" ry="4.3" fill="none" stroke="#48b8e0" stroke-width="1"/><path d="M591.5 518.2L608.9 508.3M591.5 508.3L608.9 518.2" stroke="#48b8e0" stroke-width="1"/>
<ellipse cx="644.9" cy="487.6" rx="6.6" ry="4.3" fill="none" stroke="#7a3aa8" stroke-width="1"/><path d="M636.2 492.6L653.6 482.6M636.2 482.6L653.6 492.6" stroke="#7a3aa8" stroke-width="1"/>
<ellipse cx="689.6" cy="462.0" rx="6.6" ry="4.3" fill="none" stroke="#3a3aa0" stroke-width="1"/><path d="M680.9 467.0L698.3 457.0M680.9 457.0L698.3 467.0" stroke="#3a3aa0" stroke-width="1"/>
<ellipse cx="734.3" cy="436.3" rx="6.6" ry="4.3" fill="none" stroke="#3a3aa0" stroke-width="1"/><path d="M725.6 441.3L743.0 431.4M725.6 431.4L743.0 441.3" stroke="#3a3aa0" stroke-width="1"/>
<ellipse cx="779.0" cy="410.7" rx="6.6" ry="4.3" fill="none" stroke="#5aa83a" stroke-width="1"/><path d="M770.3 415.7L787.7 405.7M770.3 405.7L787.7 415.7" stroke="#5aa83a" stroke-width="1"/>
<ellipse cx="823.7" cy="385.1" rx="6.6" ry="4.3" fill="none" stroke="#c2d434" stroke-width="1"/><path d="M815.0 390.0L832.3 380.1M815.0 380.1L832.3 390.0" stroke="#c2d434" stroke-width="1"/>
<ellipse cx="868.4" cy="359.4" rx="6.6" ry="4.3" fill="none" stroke="#5aa83a" stroke-width="1"/><path d="M859.7 364.4L877.0 354.4M859.7 354.4L877.0 364.4" stroke="#5aa83a" stroke-width="1"/>
<ellipse cx="913.0" cy="333.8" rx="6.6" ry="4.3" fill="none" stroke="#e8dc28" stroke-width="1"/><path d="M904.4 338.8L921.7 328.8M904.4 328.8L921.7 338.8" stroke="#e8dc28" stroke-width="1"/>
<ellipse cx="957.7" cy="308.1" rx="6.6" ry="4.3" fill="none" stroke="#5aa83a" stroke-width="1"/><path d="M949.1 313.1L966.4 303.2M949.1 303.2L966.4 313.1" stroke="#5aa83a" stroke-width="1"/>
<ellipse cx="1002.4" cy="282.5" rx="6.6" ry="4.3" fill="none" stroke="#c2d434" stroke-width="1"/><path d="M993.8 287.5L1011.1 277.5M993.8 277.5L1011.1 287.5" stroke="#c2d434" stroke-width="1"/>
<ellipse cx="1047.1" cy="256.9" rx="6.6" ry="4.3" fill="none" stroke="#c2d434" stroke-width="1"/><path d="M1038.4 261.8L1055.8 251.9M1038.4 251.9L1055.8 261.8" stroke="#c2d434" stroke-width="1"/>
<ellipse cx="1091.8" cy="231.2" rx="6.6" ry="4.3" fill="none" stroke="#f0902a" stroke-width="1"/><path d="M1083.1 236.2L1100.5 226.2M1083.1 226.2L1100.5 236.2" stroke="#f0902a" stroke-width="1"/>
<ellipse cx="287.5" cy="744.1" rx="6.6" ry="4.3" fill="none" stroke="#8cc03a" stroke-width="1"/><path d="M278.8 749.1L296.2 739.1M278.8 739.1L296.2 749.1" stroke="#8cc03a" stroke-width="1"/>
<ellipse cx="332.2" cy="718.4" rx="6.6" ry="4.3" fill="none" stroke="#8cc03a" stroke-width="1"/><path d="M323.5 723.4L340.8 713.5M323.5 713.5L340.8 723.4" stroke="#8cc03a" stroke-width="1"/>
<ellipse cx="376.9" cy="692.8" rx="6.6" ry="4.3" fill="none" stroke="#8cc03a" stroke-width="1"/><path d="M368.2 697.8L385.5 687.8M368.2 687.8L385.5 697.8" stroke="#8cc03a" stroke-width="1"/>
<ellipse cx="421.6" cy="667.2" rx="6.6" ry="4.3" fill="none" stroke="#f0902a" stroke-width="1"/><path d="M412.9 672.1L430.2 662.2M412.9 662.2L430.2 672.1" stroke="#f0902a" stroke-width="1"/>
<ellipse cx="466.2" cy="641.5" rx="6.6" ry="4.3" fill="none" stroke="#e8dc28" stroke-width="1"/><path d="M457.6 646.5L474.9 636.5M457.6 636.5L474.9 646.5" stroke="#e8dc28" stroke-width="1"/>
<ellipse cx="510.9" cy="615.9" rx="6.6" ry="4.3" fill="none" stroke="#e8dc28" stroke-width="1"/><path d="M502.3 620.9L519.6 610.9M502.3 610.9L519.6 620.9" stroke="#e8dc28" stroke-width="1"/>
<ellipse cx="555.6" cy="590.2" rx="6.6" ry="4.3" fill="none" stroke="#8cc03a" stroke-width="1"/><path d="M546.9 595.2L564.3 585.3M546.9 585.3L564.3 595.2" stroke="#8cc03a" stroke-width="1"/>
<ellipse cx="600.3" cy="564.6" rx="6.6" ry="4.3" fill="none" stroke="#5aa83a" stroke-width="1"/><path d="M591.6 569.6L609.0 559.6M591.6 559.6L609.0 569.6" stroke="#5aa83a" stroke-width="1"/>
<ellipse cx="645.0" cy="539.0" rx="6.6" ry="4.3" fill="none" stroke="#48b8e0" stroke-width="1"/><path d="M636.3 543.9L653.7 534.0M636.3 534.0L653.7 543.9" stroke="#48b8e0" stroke-width="1"/>
<ellipse cx="689.7" cy="513.3" rx="6.6" ry="4.3" fill="none" stroke="#3a3aa0" stroke-width="1"/><path d="M681.0 518.3L698.4 508.3M681.0 508.3L698.4 518.3" stroke="#3a3aa0" stroke-width="1"/>
<ellipse cx="734.4" cy="487.7" rx="6.6" ry="4.3" fill="none" stroke="#3a3aa0" stroke-width="1"/><path d="M725.7 492.7L743.1 482.7M725.7 482.7L743.1 492.7" stroke="#3a3aa0" stroke-width="1"/>
<ellipse cx="779.1" cy="462.0" rx="6.6" ry="4.3" fill="none" stroke="#5aa0e0" stroke-width="1"/><path d="M770.4 467.0L787.7 457.1M770.4 457.1L787.7 467.0" stroke="#5aa0e0" stroke-width="1"/>
<ellipse cx="823.8" cy="436.4" rx="6.6" ry="4.3" fill="none" stroke="#5aa83a" stroke-width="1"/><path d="M815.1 441.4L832.4 431.4M815.1 431.4L832.4 441.4" stroke="#5aa83a" stroke-width="1"/>
<ellipse cx="868.5" cy="410.8" rx="6.6" ry="4.3" fill="none" stroke="#5aa83a" stroke-width="1"/><path d="M859.8 415.7L877.1 405.8M859.8 405.8L877.1 415.7" stroke="#5aa83a" stroke-width="1"/>
<ellipse cx="913.1" cy="385.1" rx="6.6" ry="4.3" fill="none" stroke="#5aa83a" stroke-width="1"/><path d="M904.5 390.1L921.8 380.1M904.5 380.1L921.8 390.1" stroke="#5aa83a" stroke-width="1"/>
<ellipse cx="957.8" cy="359.5" rx="6.6" ry="4.3" fill="none" stroke="#e8dc28" stroke-width="1"/><path d="M949.2 364.5L966.5 354.5M949.2 354.5L966.5 364.5" stroke="#e8dc28" stroke-width="1"/>
<ellipse cx="1002.5" cy="333.8" rx="6.6" ry="4.3" fill="none" stroke="#c2d434" stroke-width="1"/><path d="M993.8 338.8L1011.2 328.9M993.8 328.9L1011.2 338.8" stroke="#c2d434" stroke-width="1"/>
<ellipse cx="1047.2" cy="308.2" rx="6.6" ry="4.3" fill="none" stroke="#e8dc28" stroke-width="1"/><path d="M1038.5 313.2L1055.9 303.2M1038.5 303.2L1055.9 313.2" stroke="#e8dc28" stroke-width="1"/>
<ellipse cx="1091.9" cy="282.6" rx="6.6" ry="4.3" fill="none" stroke="#f0902a" stroke-width="1"/><path d="M1083.2 287.5L1100.6 277.6M1083.2 277.6L1100.6 287.5" stroke="#f0902a" stroke-width="1"/>
<ellipse cx="1136.6" cy="256.9" rx="6.6" ry="4.3" fill="none" stroke="#e83a2a" stroke-width="1"/><path d="M1127.9 261.9L1145.3 251.9M1127.9 251.9L1145.3 261.9" stroke="#e83a2a" stroke-width="1"/>
<ellipse cx="332.3" cy="769.8" rx="6.6" ry="4.3" fill="none" stroke="#8cc03a" stroke-width="1"/><path d="M323.6 774.8L340.9 764.8M323.6 764.8L340.9 774.8" stroke="#8cc03a" stroke-width="1"/>
<ellipse cx="377.0" cy="744.1" rx="6.6" ry="4.3" fill="none" stroke="#8cc03a" stroke-width="1"/><path d="M368.3 749.1L385.6 739.2M368.3 739.2L385.6 749.1" stroke="#8cc03a" stroke-width="1"/>
<ellipse cx="421.6" cy="718.5" rx="6.6" ry="4.3" fill="none" stroke="#e8dc28" stroke-width="1"/><path d="M413.0 723.5L430.3 713.5M413.0 713.5L430.3 723.5" stroke="#e8dc28" stroke-width="1"/>
<ellipse cx="466.3" cy="692.9" rx="6.6" ry="4.3" fill="none" stroke="#f0902a" stroke-width="1"/><path d="M457.7 697.8L475.0 687.9M457.7 687.9L475.0 697.8" stroke="#f0902a" stroke-width="1"/>
<ellipse cx="511.0" cy="667.2" rx="6.6" ry="4.3" fill="none" stroke="#e8dc28" stroke-width="1"/><path d="M502.3 672.2L519.7 662.2M502.3 662.2L519.7 672.2" stroke="#e8dc28" stroke-width="1"/>
<ellipse cx="555.7" cy="641.6" rx="6.6" ry="4.3" fill="none" stroke="#e8dc28" stroke-width="1"/><path d="M547.0 646.6L564.4 636.6M547.0 636.6L564.4 646.6" stroke="#e8dc28" stroke-width="1"/>
<ellipse cx="600.4" cy="615.9" rx="6.6" ry="4.3" fill="none" stroke="#c2d434" stroke-width="1"/><path d="M591.7 620.9L609.1 611.0M591.7 611.0L609.1 620.9" stroke="#c2d434" stroke-width="1"/>
<ellipse cx="645.1" cy="590.3" rx="6.6" ry="4.3" fill="none" stroke="#8cc03a" stroke-width="1"/><path d="M636.4 595.3L653.8 585.3M636.4 585.3L653.8 595.3" stroke="#8cc03a" stroke-width="1"/>
<ellipse cx="689.8" cy="564.7" rx="6.6" ry="4.3" fill="none" stroke="#5aa83a" stroke-width="1"/><path d="M681.1 569.6L698.5 559.7M681.1 559.7L698.5 569.6" stroke="#5aa83a" stroke-width="1"/>
<ellipse cx="734.5" cy="539.0" rx="6.6" ry="4.3" fill="none" stroke="#48b8e0" stroke-width="1"/><path d="M725.8 544.0L743.1 534.0M725.8 534.0L743.1 544.0" stroke="#48b8e0" stroke-width="1"/>
<ellipse cx="779.2" cy="513.4" rx="6.6" ry="4.3" fill="none" stroke="#5aa0e0" stroke-width="1"/><path d="M770.5 518.4L787.8 508.4M770.5 508.4L787.8 518.4" stroke="#5aa0e0" stroke-width="1"/>
<ellipse cx="823.9" cy="487.7" rx="6.6" ry="4.3" fill="none" stroke="#5aa83a" stroke-width="1"/><path d="M815.2 492.7L832.5 482.8M815.2 482.8L832.5 492.7" stroke="#5aa83a" stroke-width="1"/>
<ellipse cx="868.5" cy="462.1" rx="6.6" ry="4.3" fill="none" stroke="#c2d434" stroke-width="1"/><path d="M859.9 467.1L877.2 457.1M859.9 457.1L877.2 467.1" stroke="#c2d434" stroke-width="1"/>
<ellipse cx="913.2" cy="436.5" rx="6.6" ry="4.3" fill="none" stroke="#c2d434" stroke-width="1"/><path d="M904.6 441.4L921.9 431.5M904.6 431.5L921.9 441.4" stroke="#c2d434" stroke-width="1"/>
<ellipse cx="957.9" cy="410.8" rx="6.6" ry="4.3" fill="none" stroke="#e83a2a" stroke-width="1"/><path d="M949.2 415.8L966.6 405.8M949.2 405.8L966.6 415.8" stroke="#e83a2a" stroke-width="1"/>
<ellipse cx="1002.6" cy="385.2" rx="6.6" ry="4.3" fill="none" stroke="#e8dc28" stroke-width="1"/><path d="M993.9 390.2L1011.3 380.2M993.9 380.2L1011.3 390.2" stroke="#e8dc28" stroke-width="1"/>
<ellipse cx="1047.3" cy="359.5" rx="6.6" ry="4.3" fill="none" stroke="#5aa83a" stroke-width="1"/><path d="M1038.6 364.5L1056.0 354.6M1038.6 354.6L1056.0 364.5" stroke="#5aa83a" stroke-width="1"/>
<ellipse cx="1092.0" cy="333.9" rx="6.6" ry="4.3" fill="none" stroke="#f0902a" stroke-width="1"/><path d="M1083.3 338.9L1100.7 328.9M1083.3 328.9L1100.7 338.9" stroke="#f0902a" stroke-width="1"/>
<ellipse cx="1136.7" cy="308.3" rx="6.6" ry="4.3" fill="none" stroke="#e83a2a" stroke-width="1"/><path d="M1128.0 313.2L1145.4 303.3M1128.0 303.3L1145.4 313.2" stroke="#e83a2a" stroke-width="1"/>
<ellipse cx="1181.4" cy="282.6" rx="6.6" ry="4.3" fill="none" stroke="#f0902a" stroke-width="1"/><path d="M1172.7 287.6L1190.0 277.6M1172.7 277.6L1190.0 287.6" stroke="#f0902a" stroke-width="1"/>
<ellipse cx="377.0" cy="795.5" rx="6.6" ry="4.3" fill="none" stroke="#8cc03a" stroke-width="1"/><path d="M368.4 800.5L385.7 790.5M368.4 790.5L385.7 800.5" stroke="#8cc03a" stroke-width="1"/>
<ellipse cx="421.7" cy="769.8" rx="6.6" ry="4.3" fill="none" stroke="#c2d434" stroke-width="1"/><path d="M413.1 774.8L430.4 764.9M413.1 764.9L430.4 774.8" stroke="#c2d434" stroke-width="1"/>
<ellipse cx="466.4" cy="744.2" rx="6.6" ry="4.3" fill="none" stroke="#c2d434" stroke-width="1"/><path d="M457.7 749.2L475.1 739.2M457.7 739.2L475.1 749.2" stroke="#c2d434" stroke-width="1"/>
<ellipse cx="511.1" cy="718.6" rx="6.6" ry="4.3" fill="none" stroke="#c2d434" stroke-width="1"/><path d="M502.4 723.5L519.8 713.6M502.4 713.6L519.8 723.5" stroke="#c2d434" stroke-width="1"/>
<ellipse cx="555.8" cy="692.9" rx="6.6" ry="4.3" fill="none" stroke="#e8dc28" stroke-width="1"/><path d="M547.1 697.9L564.5 687.9M547.1 687.9L564.5 697.9" stroke="#e8dc28" stroke-width="1"/>
<ellipse cx="600.5" cy="667.3" rx="6.6" ry="4.3" fill="none" stroke="#e8dc28" stroke-width="1"/><path d="M591.8 672.3L609.2 662.3M591.8 662.3L609.2 672.3" stroke="#e8dc28" stroke-width="1"/>
<ellipse cx="645.2" cy="641.6" rx="6.6" ry="4.3" fill="none" stroke="#e8dc28" stroke-width="1"/><path d="M636.5 646.6L653.9 636.7M636.5 636.7L653.9 646.6" stroke="#e8dc28" stroke-width="1"/>
<ellipse cx="689.9" cy="616.0" rx="6.6" ry="4.3" fill="none" stroke="#8cc03a" stroke-width="1"/><path d="M681.2 621.0L698.5 611.0M681.2 611.0L698.5 621.0" stroke="#8cc03a" stroke-width="1"/>
<ellipse cx="734.6" cy="590.4" rx="6.6" ry="4.3" fill="none" stroke="#48b0a0" stroke-width="1"/><path d="M725.9 595.3L743.2 585.4M725.9 585.4L743.2 595.3" stroke="#48b0a0" stroke-width="1"/>
<ellipse cx="779.2" cy="564.7" rx="6.6" ry="4.3" fill="none" stroke="#48b0a0" stroke-width="1"/><path d="M770.6 569.7L787.9 559.7M770.6 559.7L787.9 569.7" stroke="#48b0a0" stroke-width="1"/>
<ellipse cx="823.9" cy="539.1" rx="6.6" ry="4.3" fill="none" stroke="#5aa83a" stroke-width="1"/><path d="M815.3 544.1L832.6 534.1M815.3 534.1L832.6 544.1" stroke="#5aa83a" stroke-width="1"/>
<ellipse cx="868.6" cy="513.4" rx="6.6" ry="4.3" fill="none" stroke="#5aa83a" stroke-width="1"/><path d="M860.0 518.4L877.3 508.5M860.0 508.5L877.3 518.4" stroke="#5aa83a" stroke-width="1"/>
<ellipse cx="913.3" cy="487.8" rx="6.6" ry="4.3" fill="none" stroke="#5aa83a" stroke-width="1"/><path d="M904.6 492.8L922.0 482.8M904.6 482.8L922.0 492.8" stroke="#5aa83a" stroke-width="1"/>
<ellipse cx="958.0" cy="462.2" rx="6.6" ry="4.3" fill="none" stroke="#c2d434" stroke-width="1"/><path d="M949.3 467.1L966.7 457.2M949.3 457.2L966.7 467.1" stroke="#c2d434" stroke-width="1"/>
<ellipse cx="1002.7" cy="436.5" rx="6.6" ry="4.3" fill="none" stroke="#c2d434" stroke-width="1"/><path d="M994.0 441.5L1011.4 431.5M994.0 431.5L1011.4 441.5" stroke="#c2d434" stroke-width="1"/>
<ellipse cx="1047.4" cy="410.9" rx="6.6" ry="4.3" fill="none" stroke="#5aa83a" stroke-width="1"/><path d="M1038.7 415.9L1056.1 405.9M1038.7 405.9L1056.1 415.9" stroke="#5aa83a" stroke-width="1"/>
<ellipse cx="1092.1" cy="385.2" rx="6.6" ry="4.3" fill="none" stroke="#48b0a0" stroke-width="1"/><path d="M1083.4 390.2L1100.8 380.3M1083.4 380.3L1100.8 390.2" stroke="#48b0a0" stroke-width="1"/>
<ellipse cx="1136.8" cy="359.6" rx="6.6" ry="4.3" fill="none" stroke="#e8dc28" stroke-width="1"/><path d="M1128.1 364.6L1145.4 354.6M1128.1 354.6L1145.4 364.6" stroke="#e8dc28" stroke-width="1"/>
<ellipse cx="1181.5" cy="334.0" rx="6.6" ry="4.3" fill="none" stroke="#f0902a" stroke-width="1"/><path d="M1172.8 338.9L1190.1 329.0M1172.8 329.0L1190.1 338.9" stroke="#f0902a" stroke-width="1"/>
<ellipse cx="1226.2" cy="308.3" rx="6.6" ry="4.3" fill="none" stroke="#f0902a" stroke-width="1"/><path d="M1217.5 313.3L1234.8 303.3M1217.5 303.3L1234.8 313.3" stroke="#f0902a" stroke-width="1"/>
<ellipse cx="466.5" cy="795.5" rx="6.6" ry="4.3" fill="none" stroke="#8cc03a" stroke-width="1"/><path d="M457.8 800.5L475.2 790.6M457.8 790.6L475.2 800.5" stroke="#8cc03a" stroke-width="1"/>
<ellipse cx="511.2" cy="769.9" rx="6.6" ry="4.3" fill="none" stroke="#8cc03a" stroke-width="1"/><path d="M502.5 774.9L519.9 764.9M502.5 764.9L519.9 774.9" stroke="#8cc03a" stroke-width="1"/>
<ellipse cx="555.9" cy="744.3" rx="6.6" ry="4.3" fill="none" stroke="#8cc03a" stroke-width="1"/><path d="M547.2 749.2L564.6 739.3M547.2 739.3L564.6 749.2" stroke="#8cc03a" stroke-width="1"/>
<ellipse cx="600.6" cy="718.6" rx="6.6" ry="4.3" fill="none" stroke="#8cc03a" stroke-width="1"/><path d="M591.9 723.6L609.3 713.6M591.9 713.6L609.3 723.6" stroke="#8cc03a" stroke-width="1"/>
<ellipse cx="645.3" cy="693.0" rx="6.6" ry="4.3" fill="none" stroke="#c2d434" stroke-width="1"/><path d="M636.6 698.0L653.9 688.0M636.6 688.0L653.9 698.0" stroke="#c2d434" stroke-width="1"/>
<ellipse cx="690.0" cy="667.3" rx="6.6" ry="4.3" fill="none" stroke="#c2d434" stroke-width="1"/><path d="M681.3 672.3L698.6 662.4M681.3 662.4L698.6 672.3" stroke="#c2d434" stroke-width="1"/>
<ellipse cx="734.6" cy="641.7" rx="6.6" ry="4.3" fill="none" stroke="#5aa83a" stroke-width="1"/><path d="M726.0 646.7L743.3 636.7M726.0 636.7L743.3 646.7" stroke="#5aa83a" stroke-width="1"/>
<ellipse cx="779.3" cy="616.1" rx="6.6" ry="4.3" fill="none" stroke="#5aa83a" stroke-width="1"/><path d="M770.7 621.0L788.0 611.1M770.7 611.1L788.0 621.0" stroke="#5aa83a" stroke-width="1"/>
<ellipse cx="824.0" cy="590.4" rx="6.6" ry="4.3" fill="none" stroke="#48b8e0" stroke-width="1"/><path d="M815.4 595.4L832.7 585.4M815.4 585.4L832.7 595.4" stroke="#48b8e0" stroke-width="1"/>
<ellipse cx="868.7" cy="564.8" rx="6.6" ry="4.3" fill="none" stroke="#5aa83a" stroke-width="1"/><path d="M860.0 569.8L877.4 559.8M860.0 559.8L877.4 569.8" stroke="#5aa83a" stroke-width="1"/>
<ellipse cx="913.4" cy="539.1" rx="6.6" ry="4.3" fill="none" stroke="#48b0a0" stroke-width="1"/><path d="M904.7 544.1L922.1 534.2M904.7 534.2L922.1 544.1" stroke="#48b0a0" stroke-width="1"/>
<ellipse cx="958.1" cy="513.5" rx="6.6" ry="4.3" fill="none" stroke="#c2d434" stroke-width="1"/><path d="M949.4 518.5L966.8 508.5M949.4 508.5L966.8 518.5" stroke="#c2d434" stroke-width="1"/>
<ellipse cx="1002.8" cy="487.9" rx="6.6" ry="4.3" fill="none" stroke="#f0902a" stroke-width="1"/><path d="M994.1 492.8L1011.5 482.9M994.1 482.9L1011.5 492.8" stroke="#f0902a" stroke-width="1"/>
<ellipse cx="1047.5" cy="462.2" rx="6.6" ry="4.3" fill="none" stroke="#e8dc28" stroke-width="1"/><path d="M1038.8 467.2L1056.2 457.2M1038.8 457.2L1056.2 467.2" stroke="#e8dc28" stroke-width="1"/>
<ellipse cx="1092.2" cy="436.6" rx="6.6" ry="4.3" fill="none" stroke="#c2d434" stroke-width="1"/><path d="M1083.5 441.6L1100.8 431.6M1083.5 431.6L1100.8 441.6" stroke="#c2d434" stroke-width="1"/>
<ellipse cx="1136.9" cy="410.9" rx="6.6" ry="4.3" fill="none" stroke="#5aa83a" stroke-width="1"/><path d="M1128.2 415.9L1145.5 406.0M1128.2 406.0L1145.5 415.9" stroke="#5aa83a" stroke-width="1"/>
<ellipse cx="1181.5" cy="385.3" rx="6.6" ry="4.3" fill="none" stroke="#c2d434" stroke-width="1"/><path d="M1172.9 390.3L1190.2 380.3M1172.9 380.3L1190.2 390.3" stroke="#c2d434" stroke-width="1"/>
<ellipse cx="1226.2" cy="359.7" rx="6.6" ry="4.3" fill="none" stroke="#e8dc28" stroke-width="1"/><path d="M1217.6 364.6L1234.9 354.7M1217.6 354.7L1234.9 364.6" stroke="#e8dc28" stroke-width="1"/>
<ellipse cx="1270.9" cy="334.0" rx="6.6" ry="4.3" fill="none" stroke="#c2d434" stroke-width="1"/><path d="M1262.3 339.0L1279.6 329.0M1262.3 329.0L1279.6 339.0" stroke="#c2d434" stroke-width="1"/>
<ellipse cx="556.0" cy="795.6" rx="6.6" ry="4.3" fill="none" stroke="#5aa83a" stroke-width="1"/><path d="M547.3 800.6L564.7 790.6M547.3 790.6L564.7 800.6" stroke="#5aa83a" stroke-width="1"/>
<ellipse cx="600.7" cy="770.0" rx="6.6" ry="4.3" fill="none" stroke="#5aa83a" stroke-width="1"/><path d="M592.0 774.9L609.3 765.0M592.0 765.0L609.3 774.9" stroke="#5aa83a" stroke-width="1"/>
<ellipse cx="645.4" cy="744.3" rx="6.6" ry="4.3" fill="none" stroke="#5aa83a" stroke-width="1"/><path d="M636.7 749.3L654.0 739.3M636.7 739.3L654.0 749.3" stroke="#5aa83a" stroke-width="1"/>
<ellipse cx="690.0" cy="718.7" rx="6.6" ry="4.3" fill="none" stroke="#8cc03a" stroke-width="1"/><path d="M681.4 723.7L698.7 713.7M681.4 713.7L698.7 723.7" stroke="#8cc03a" stroke-width="1"/>
<ellipse cx="734.7" cy="693.0" rx="6.6" ry="4.3" fill="none" stroke="#8cc03a" stroke-width="1"/><path d="M726.1 698.0L743.4 688.1M726.1 688.1L743.4 698.0" stroke="#8cc03a" stroke-width="1"/>
<ellipse cx="779.4" cy="667.4" rx="6.6" ry="4.3" fill="none" stroke="#8cc03a" stroke-width="1"/><path d="M770.8 672.4L788.1 662.4M770.8 662.4L788.1 672.4" stroke="#8cc03a" stroke-width="1"/>
<ellipse cx="824.1" cy="641.8" rx="6.6" ry="4.3" fill="none" stroke="#5aa83a" stroke-width="1"/><path d="M815.4 646.7L832.8 636.8M815.4 636.8L832.8 646.7" stroke="#5aa83a" stroke-width="1"/>
<ellipse cx="868.8" cy="616.1" rx="6.6" ry="4.3" fill="none" stroke="#48b0a0" stroke-width="1"/><path d="M860.1 621.1L877.5 611.1M860.1 611.1L877.5 621.1" stroke="#48b0a0" stroke-width="1"/>
<ellipse cx="913.5" cy="590.5" rx="6.6" ry="4.3" fill="none" stroke="#48b8e0" stroke-width="1"/><path d="M904.8 595.5L922.2 585.5M904.8 585.5L922.2 595.5" stroke="#48b8e0" stroke-width="1"/>
<ellipse cx="958.2" cy="564.8" rx="6.6" ry="4.3" fill="none" stroke="#5aa83a" stroke-width="1"/><path d="M949.5 569.8L966.9 559.9M949.5 559.9L966.9 569.8" stroke="#5aa83a" stroke-width="1"/>
<ellipse cx="1002.9" cy="539.2" rx="6.6" ry="4.3" fill="none" stroke="#e8dc28" stroke-width="1"/><path d="M994.2 544.2L1011.6 534.2M994.2 534.2L1011.6 544.2" stroke="#e8dc28" stroke-width="1"/>
<ellipse cx="1047.6" cy="513.6" rx="6.6" ry="4.3" fill="none" stroke="#f0902a" stroke-width="1"/><path d="M1038.9 518.5L1056.2 508.6M1038.9 508.6L1056.2 518.5" stroke="#f0902a" stroke-width="1"/>
<ellipse cx="1092.3" cy="487.9" rx="6.6" ry="4.3" fill="none" stroke="#f0902a" stroke-width="1"/><path d="M1083.6 492.9L1100.9 482.9M1083.6 482.9L1100.9 492.9" stroke="#f0902a" stroke-width="1"/>
<ellipse cx="1137.0" cy="462.3" rx="6.6" ry="4.3" fill="none" stroke="#c2d434" stroke-width="1"/><path d="M1128.3 467.3L1145.6 457.3M1128.3 457.3L1145.6 467.3" stroke="#c2d434" stroke-width="1"/>
<ellipse cx="1181.6" cy="436.6" rx="6.6" ry="4.3" fill="none" stroke="#c2d434" stroke-width="1"/><path d="M1173.0 441.6L1190.3 431.7M1173.0 431.7L1190.3 441.6" stroke="#c2d434" stroke-width="1"/>
<ellipse cx="1226.3" cy="411.0" rx="6.6" ry="4.3" fill="none" stroke="#5aa83a" stroke-width="1"/><path d="M1217.7 416.0L1235.0 406.0M1217.7 406.0L1235.0 416.0" stroke="#5aa83a" stroke-width="1"/>
<ellipse cx="1271.0" cy="385.4" rx="6.6" ry="4.3" fill="none" stroke="#5aa83a" stroke-width="1"/><path d="M1262.3 390.3L1279.7 380.4M1262.3 380.4L1279.7 390.3" stroke="#5aa83a" stroke-width="1"/>
<ellipse cx="1315.7" cy="359.7" rx="6.6" ry="4.3" fill="none" stroke="#5aa83a" stroke-width="1"/><path d="M1307.0 364.7L1324.4 354.7M1307.0 354.7L1324.4 364.7" stroke="#5aa83a" stroke-width="1"/>
<ellipse cx="365.4" cy="731.2" rx="6.6" ry="4.3" fill="none" stroke="#e83a2a" stroke-width="1"/><path d="M356.7 736.2L374.1 726.2M356.7 726.2L374.1 736.2" stroke="#e83a2a" stroke-width="1"/>
<ellipse cx="318.0" cy="768.8" rx="6.6" ry="4.3" fill="none" stroke="#e83a2a" stroke-width="1"/><path d="M309.3 773.8L326.7 763.8M309.3 763.8L326.7 773.8" stroke="#e83a2a" stroke-width="1"/>
<ellipse cx="671.0" cy="637.7" rx="6.6" ry="4.3" fill="none" stroke="#e83a2a" stroke-width="1"/><path d="M662.3 642.7L679.7 632.7M662.3 632.7L679.7 642.7" stroke="#e83a2a" stroke-width="1"/>
<ellipse cx="793.2" cy="701.0" rx="6.6" ry="4.3" fill="none" stroke="#e83a2a" stroke-width="1"/><path d="M784.5 706.0L801.9 696.0M784.5 696.0L801.9 706.0" stroke="#e83a2a" stroke-width="1"/>
<ellipse cx="826.6" cy="721.0" rx="6.6" ry="4.3" fill="none" stroke="#e83a2a" stroke-width="1"/><path d="M817.9 726.0L835.3 716.0M817.9 716.0L835.3 726.0" stroke="#e83a2a" stroke-width="1"/>
<ellipse cx="846.6" cy="732.1" rx="6.6" ry="4.3" fill="none" stroke="#e83a2a" stroke-width="1"/><path d="M837.9 737.1L855.3 727.1M837.9 727.1L855.3 737.1" stroke="#e83a2a" stroke-width="1"/>
<ellipse cx="1052.0" cy="553.3" rx="6.6" ry="4.3" fill="none" stroke="#e83a2a" stroke-width="1"/><path d="M1043.3 558.3L1060.7 548.3M1043.3 548.3L1060.7 558.3" stroke="#e83a2a" stroke-width="1"/>
<ellipse cx="1088.7" cy="571.1" rx="6.6" ry="4.3" fill="none" stroke="#e83a2a" stroke-width="1"/><path d="M1080.0 576.1L1097.4 566.1M1080.0 566.1L1097.4 576.1" stroke="#e83a2a" stroke-width="1"/>
<ellipse cx="1103.1" cy="578.9" rx="6.6" ry="4.3" fill="none" stroke="#e83a2a" stroke-width="1"/><path d="M1094.4 583.9L1111.8 573.9M1094.4 573.9L1111.8 583.9" stroke="#e83a2a" stroke-width="1"/>
<ellipse cx="1314.2" cy="401.3" rx="6.6" ry="4.3" fill="none" stroke="#e83a2a" stroke-width="1"/><path d="M1305.5 406.3L1322.9 396.3M1305.5 396.3L1322.9 406.3" stroke="#e83a2a" stroke-width="1"/>
<ellipse cx="1357.0" cy="427.0" rx="6.6" ry="4.3" fill="none" stroke="#e83a2a" stroke-width="1"/><path d="M1348.3 432.0L1365.7 422.0M1348.3 422.0L1365.7 432.0" stroke="#e83a2a" stroke-width="1"/>
<ellipse cx="1365.0" cy="431.0" rx="6.6" ry="4.3" fill="none" stroke="#e83a2a" stroke-width="1"/><path d="M1356.3 436.0L1373.7 426.0M1356.3 426.0L1373.7 436.0" stroke="#e83a2a" stroke-width="1"/>
<ellipse cx="1372.0" cy="435.0" rx="6.6" ry="4.3" fill="none" stroke="#e83a2a" stroke-width="1"/><path d="M1363.3 440.0L1380.7 430.0M1363.3 430.0L1380.7 440.0" stroke="#e83a2a" stroke-width="1"/>
<ellipse cx="1379.0" cy="439.0" rx="6.6" ry="4.3" fill="none" stroke="#e83a2a" stroke-width="1"/><path d="M1370.3 444.0L1387.7 434.0M1370.3 434.0L1387.7 444.0" stroke="#e83a2a" stroke-width="1"/>
<ellipse cx="1386.0" cy="443.0" rx="6.6" ry="4.3" fill="none" stroke="#e83a2a" stroke-width="1"/><path d="M1377.3 448.0L1394.7 438.0M1377.3 438.0L1394.7 448.0" stroke="#e83a2a" stroke-width="1"/>
<ellipse cx="916.5" cy="174.2" rx="6.6" ry="4.3" fill="none" stroke="#e83a2a" stroke-width="1"/><path d="M907.8 179.2L925.2 169.2M907.8 169.2L925.2 179.2" stroke="#e83a2a" stroke-width="1"/>
<ellipse cx="932.1" cy="183.1" rx="6.6" ry="4.3" fill="none" stroke="#e83a2a" stroke-width="1"/><path d="M923.4 188.1L940.8 178.1M923.4 178.1L940.8 188.1" stroke="#e83a2a" stroke-width="1"/>
<ellipse cx="944.3" cy="190.8" rx="6.6" ry="4.3" fill="none" stroke="#e83a2a" stroke-width="1"/><path d="M935.6 195.8L953.0 185.8M935.6 185.8L953.0 195.8" stroke="#e83a2a" stroke-width="1"/>
<ellipse cx="966.5" cy="205.3" rx="6.6" ry="4.3" fill="none" stroke="#e83a2a" stroke-width="1"/><path d="M957.8 210.3L975.2 200.3M957.8 200.3L975.2 210.3" stroke="#e83a2a" stroke-width="1"/>
<ellipse cx="384.4" cy="468.2" rx="6.6" ry="4.3" fill="none" stroke="#e83a2a" stroke-width="1"/><path d="M375.7 473.2L393.1 463.2M375.7 463.2L393.1 473.2" stroke="#e83a2a" stroke-width="1"/>
<ellipse cx="408.1" cy="484.0" rx="6.6" ry="4.3" fill="none" stroke="#e83a2a" stroke-width="1"/><path d="M399.4 489.0L416.8 479.0M399.4 479.0L416.8 489.0" stroke="#e83a2a" stroke-width="1"/>
<ellipse cx="446.0" cy="503.4" rx="6.6" ry="4.3" fill="none" stroke="#e83a2a" stroke-width="1"/><path d="M437.3 508.4L454.7 498.4M437.3 498.4L454.7 508.4" stroke="#e83a2a" stroke-width="1"/>
<ellipse cx="651.9" cy="320.8" rx="6.6" ry="4.3" fill="none" stroke="#e83a2a" stroke-width="1"/><path d="M643.2 325.8L660.6 315.8M643.2 315.8L660.6 325.8" stroke="#e83a2a" stroke-width="1"/>
<ellipse cx="670.4" cy="333.0" rx="6.6" ry="4.3" fill="none" stroke="#e83a2a" stroke-width="1"/><path d="M661.7 338.0L679.1 328.0M661.7 328.0L679.1 338.0" stroke="#e83a2a" stroke-width="1"/>
<ellipse cx="709.3" cy="351.9" rx="6.6" ry="4.3" fill="none" stroke="#e83a2a" stroke-width="1"/><path d="M700.6 356.9L718.0 346.9M700.6 346.9L718.0 356.9" stroke="#e83a2a" stroke-width="1"/>
<ellipse cx="181.9" cy="621.1" rx="6.6" ry="4.3" fill="none" stroke="#b048b0" stroke-width="1"/><path d="M173.2 626.1L190.6 616.1M173.2 616.1L190.6 626.1" stroke="#b048b0" stroke-width="1"/>
<ellipse cx="237.4" cy="623.9" rx="6.6" ry="4.3" fill="none" stroke="#b048b0" stroke-width="1"/><path d="M228.7 628.9L246.1 618.9M228.7 618.9L246.1 628.9" stroke="#b048b0" stroke-width="1"/>
<ellipse cx="192.4" cy="671.0" rx="6.6" ry="4.3" fill="none" stroke="#b048b0" stroke-width="1"/><path d="M183.7 676.0L201.1 666.0M183.7 666.0L201.1 676.0" stroke="#b048b0" stroke-width="1"/>
<ellipse cx="249.0" cy="678.3" rx="6.6" ry="4.3" fill="none" stroke="#b048b0" stroke-width="1"/><path d="M240.3 683.3L257.7 673.3M240.3 673.3L257.7 683.3" stroke="#b048b0" stroke-width="1"/>
<ellipse cx="192.3" cy="717.0" rx="6.6" ry="4.3" fill="none" stroke="#b048b0" stroke-width="1"/><path d="M183.6 722.0L201.0 712.0M183.6 712.0L201.0 722.0" stroke="#b048b0" stroke-width="1"/>
<ellipse cx="223.9" cy="736.0" rx="6.6" ry="4.3" fill="none" stroke="#b048b0" stroke-width="1"/><path d="M215.2 741.0L232.6 731.0M215.2 731.0L232.6 741.0" stroke="#b048b0" stroke-width="1"/>
<ellipse cx="213.9" cy="762.2" rx="6.6" ry="4.3" fill="none" stroke="#b048b0" stroke-width="1"/><path d="M205.2 767.2L222.6 757.2M205.2 757.2L222.6 767.2" stroke="#b048b0" stroke-width="1"/>
<ellipse cx="282.5" cy="792.0" rx="6.6" ry="4.3" fill="none" stroke="#b048b0" stroke-width="1"/><path d="M273.8 797.0L291.2 787.0M273.8 787.0L291.2 797.0" stroke="#b048b0" stroke-width="1"/>
<ellipse cx="340.2" cy="832.5" rx="6.6" ry="4.3" fill="none" stroke="#b048b0" stroke-width="1"/><path d="M331.5 837.5L348.9 827.5M331.5 827.5L348.9 837.5" stroke="#b048b0" stroke-width="1"/>
<ellipse cx="383.6" cy="828.0" rx="6.6" ry="4.3" fill="none" stroke="#b048b0" stroke-width="1"/><path d="M374.9 833.0L392.3 823.0M374.9 823.0L392.3 833.0" stroke="#b048b0" stroke-width="1"/>
<ellipse cx="473.0" cy="812.5" rx="6.6" ry="4.3" fill="none" stroke="#b048b0" stroke-width="1"/><path d="M464.3 817.5L481.7 807.5M464.3 807.5L481.7 817.5" stroke="#b048b0" stroke-width="1"/>
<ellipse cx="584.1" cy="819.4" rx="6.6" ry="4.3" fill="none" stroke="#b048b0" stroke-width="1"/><path d="M575.4 824.4L592.8 814.4M575.4 814.4L592.8 824.4" stroke="#b048b0" stroke-width="1"/>
<ellipse cx="417.0" cy="846.9" rx="6.6" ry="4.3" fill="none" stroke="#b048b0" stroke-width="1"/><path d="M408.3 851.9L425.7 841.9M408.3 841.9L425.7 851.9" stroke="#b048b0" stroke-width="1"/>
<ellipse cx="498.2" cy="844.6" rx="6.6" ry="4.3" fill="none" stroke="#b048b0" stroke-width="1"/><path d="M489.5 849.6L506.9 839.6M489.5 839.6L506.9 849.6" stroke="#b048b0" stroke-width="1"/>
<ellipse cx="591.0" cy="850.3" rx="6.6" ry="4.3" fill="none" stroke="#b048b0" stroke-width="1"/><path d="M582.3 855.3L599.7 845.3M582.3 845.3L599.7 855.3" stroke="#b048b0" stroke-width="1"/>
<ellipse cx="568.7" cy="427.7" rx="6.6" ry="4.3" fill="none" stroke="#b048b0" stroke-width="1"/><path d="M560.0 432.7L577.4 422.7M560.0 422.7L577.4 432.7" stroke="#b048b0" stroke-width="1"/>
<ellipse cx="498.8" cy="457.7" rx="6.6" ry="4.3" fill="none" stroke="#b048b0" stroke-width="1"/><path d="M490.1 462.7L507.5 452.7M490.1 452.7L507.5 462.7" stroke="#b048b0" stroke-width="1"/>
<ellipse cx="624.2" cy="384.4" rx="6.6" ry="4.3" fill="none" stroke="#b048b0" stroke-width="1"/><path d="M615.5 389.4L632.9 379.4M615.5 379.4L632.9 389.4" stroke="#b048b0" stroke-width="1"/>
<ellipse cx="758.8" cy="307.4" rx="6.6" ry="4.3" fill="none" stroke="#b048b0" stroke-width="1"/><path d="M750.1 312.4L767.5 302.4M750.1 302.4L767.5 312.4" stroke="#b048b0" stroke-width="1"/>
<ellipse cx="833.2" cy="277.4" rx="6.6" ry="4.3" fill="none" stroke="#b048b0" stroke-width="1"/><path d="M824.5 282.4L841.9 272.4M824.5 272.4L841.9 282.4" stroke="#b048b0" stroke-width="1"/>
<ellipse cx="885.4" cy="235.3" rx="6.6" ry="4.3" fill="none" stroke="#b048b0" stroke-width="1"/><path d="M876.7 240.3L894.1 230.3M876.7 230.3L894.1 240.3" stroke="#b048b0" stroke-width="1"/>
<ellipse cx="1028.9" cy="142.0" rx="6.6" ry="4.3" fill="none" stroke="#b048b0" stroke-width="1"/><path d="M1020.2 147.0L1037.6 137.0M1020.2 137.0L1037.6 147.0" stroke="#b048b0" stroke-width="1"/>
<ellipse cx="1121.0" cy="155.3" rx="6.6" ry="4.3" fill="none" stroke="#b048b0" stroke-width="1"/><path d="M1112.3 160.3L1129.7 150.3M1112.3 150.3L1129.7 160.3" stroke="#b048b0" stroke-width="1"/>
<ellipse cx="1123.3" cy="198.2" rx="6.6" ry="4.3" fill="none" stroke="#b048b0" stroke-width="1"/><path d="M1114.6 203.2L1132.0 193.2M1114.6 193.2L1132.0 203.2" stroke="#b048b0" stroke-width="1"/>
<ellipse cx="1187.7" cy="235.3" rx="6.6" ry="4.3" fill="none" stroke="#b048b0" stroke-width="1"/><path d="M1179.0 240.3L1196.4 230.3M1179.0 230.3L1196.4 240.3" stroke="#b048b0" stroke-width="1"/>
<ellipse cx="1208.8" cy="205.3" rx="6.6" ry="4.3" fill="none" stroke="#b048b0" stroke-width="1"/><path d="M1200.1 210.3L1217.5 200.3M1200.1 200.3L1217.5 210.3" stroke="#b048b0" stroke-width="1"/>
<ellipse cx="1229.8" cy="258.6" rx="6.6" ry="4.3" fill="none" stroke="#b048b0" stroke-width="1"/><path d="M1221.1 263.6L1238.5 253.6M1221.1 253.6L1238.5 263.6" stroke="#b048b0" stroke-width="1"/>
<ellipse cx="1266.5" cy="240.4" rx="6.6" ry="4.3" fill="none" stroke="#b048b0" stroke-width="1"/><path d="M1257.8 245.4L1275.2 235.4M1257.8 235.4L1275.2 245.4" stroke="#b048b0" stroke-width="1"/>
<ellipse cx="1294.2" cy="295.2" rx="6.6" ry="4.3" fill="none" stroke="#b048b0" stroke-width="1"/><path d="M1285.5 300.2L1302.9 290.2M1285.5 290.2L1302.9 300.2" stroke="#b048b0" stroke-width="1"/>
<ellipse cx="1313.1" cy="265.2" rx="6.6" ry="4.3" fill="none" stroke="#b048b0" stroke-width="1"/><path d="M1304.4 270.2L1321.8 260.2M1304.4 260.2L1321.8 270.2" stroke="#b048b0" stroke-width="1"/>
<ellipse cx="1403.7" cy="315.0" rx="6.6" ry="4.3" fill="none" stroke="#b048b0" stroke-width="1"/><path d="M1395.0 320.0L1412.4 310.0M1395.0 310.0L1412.4 320.0" stroke="#b048b0" stroke-width="1"/>
<ellipse cx="1417.8" cy="365.6" rx="6.6" ry="4.3" fill="none" stroke="#b048b0" stroke-width="1"/><path d="M1409.1 370.6L1426.5 360.6M1409.1 360.6L1426.5 370.6" stroke="#b048b0" stroke-width="1"/>
<ellipse cx="1347.2" cy="285.2" rx="6.6" ry="4.3" fill="none" stroke="#b048b0" stroke-width="1"/><path d="M1338.5 290.2L1355.9 280.2M1338.5 280.2L1355.9 290.2" stroke="#b048b0" stroke-width="1"/>
<ellipse cx="1343.8" cy="323.6" rx="6.6" ry="4.3" fill="none" stroke="#b048b0" stroke-width="1"/><path d="M1335.1 328.6L1352.5 318.6M1335.1 318.6L1352.5 328.6" stroke="#b048b0" stroke-width="1"/>
<ellipse cx="1257.4" cy="446.3" rx="6.6" ry="4.3" fill="none" stroke="#b048b0" stroke-width="1"/><path d="M1248.7 451.3L1266.1 441.3M1248.7 441.3L1266.1 451.3" stroke="#b048b0" stroke-width="1"/>
<ellipse cx="1189.9" cy="477.0" rx="6.6" ry="4.3" fill="none" stroke="#b048b0" stroke-width="1"/><path d="M1181.2 482.0L1198.6 472.0M1181.2 472.0L1198.6 482.0" stroke="#b048b0" stroke-width="1"/>
<ellipse cx="1130.8" cy="518.4" rx="6.6" ry="4.3" fill="none" stroke="#b048b0" stroke-width="1"/><path d="M1122.1 523.4L1139.5 513.4M1122.1 513.4L1139.5 523.4" stroke="#b048b0" stroke-width="1"/>
<ellipse cx="996.5" cy="595.5" rx="6.6" ry="4.3" fill="none" stroke="#b048b0" stroke-width="1"/><path d="M987.8 600.5L1005.2 590.5M987.8 590.5L1005.2 600.5" stroke="#b048b0" stroke-width="1"/>
<ellipse cx="935.5" cy="621.1" rx="6.6" ry="4.3" fill="none" stroke="#b048b0" stroke-width="1"/><path d="M926.8 626.1L944.2 616.1M926.8 616.1L944.2 626.1" stroke="#b048b0" stroke-width="1"/>
<ellipse cx="872.2" cy="668.8" rx="6.6" ry="4.3" fill="none" stroke="#b048b0" stroke-width="1"/><path d="M863.5 673.8L880.9 663.8M863.5 663.8L880.9 673.8" stroke="#b048b0" stroke-width="1"/>
<ellipse cx="168.0" cy="645.5" rx="6.6" ry="4.3" fill="none" stroke="#3a9a3a" stroke-width="1"/><path d="M159.3 650.5L176.7 640.5M159.3 640.5L176.7 650.5" stroke="#3a9a3a" stroke-width="1"/>
<ellipse cx="168.0" cy="689.4" rx="6.6" ry="4.3" fill="none" stroke="#3a9a3a" stroke-width="1"/><path d="M159.3 694.4L176.7 684.4M159.3 684.4L176.7 694.4" stroke="#3a9a3a" stroke-width="1"/>
<ellipse cx="241.0" cy="786.5" rx="6.6" ry="4.3" fill="none" stroke="#3a9a3a" stroke-width="1"/><path d="M232.3 791.5L249.7 781.5M232.3 781.5L249.7 791.5" stroke="#3a9a3a" stroke-width="1"/>
<ellipse cx="295.1" cy="816.3" rx="6.6" ry="4.3" fill="none" stroke="#3a9a3a" stroke-width="1"/><path d="M286.4 821.3L303.8 811.3M286.4 811.3L303.8 821.3" stroke="#3a9a3a" stroke-width="1"/>
<ellipse cx="460.5" cy="856.0" rx="6.6" ry="4.3" fill="none" stroke="#3a9a3a" stroke-width="1"/><path d="M451.8 861.0L469.2 851.0M451.8 851.0L469.2 861.0" stroke="#3a9a3a" stroke-width="1"/>
<ellipse cx="540.6" cy="856.0" rx="6.6" ry="4.3" fill="none" stroke="#3a9a3a" stroke-width="1"/><path d="M531.9 861.0L549.3 851.0M531.9 851.0L549.3 861.0" stroke="#3a9a3a" stroke-width="1"/>
<ellipse cx="1103.3" cy="126.4" rx="6.6" ry="4.3" fill="none" stroke="#3a9a3a" stroke-width="1"/><path d="M1094.6 131.4L1112.0 121.4M1094.6 121.4L1112.0 131.4" stroke="#3a9a3a" stroke-width="1"/>
<ellipse cx="1155.5" cy="155.3" rx="6.6" ry="4.3" fill="none" stroke="#3a9a3a" stroke-width="1"/><path d="M1146.8 160.3L1164.2 150.3M1146.8 150.3L1164.2 160.3" stroke="#3a9a3a" stroke-width="1"/>
<ellipse cx="1248.7" cy="208.6" rx="6.6" ry="4.3" fill="none" stroke="#3a9a3a" stroke-width="1"/><path d="M1240.0 213.6L1257.4 203.6M1240.0 203.6L1257.4 213.6" stroke="#3a9a3a" stroke-width="1"/>
<ellipse cx="1297.6" cy="236.4" rx="6.6" ry="4.3" fill="none" stroke="#3a9a3a" stroke-width="1"/><path d="M1288.9 241.4L1306.3 231.4M1288.9 231.4L1306.3 241.4" stroke="#3a9a3a" stroke-width="1"/>
<ellipse cx="1392.3" cy="289.3" rx="6.6" ry="4.3" fill="none" stroke="#3a9a3a" stroke-width="1"/><path d="M1383.6 294.3L1401.0 284.3M1383.6 284.3L1401.0 294.3" stroke="#3a9a3a" stroke-width="1"/>
<ellipse cx="291.3" cy="787.0" rx="6.6" ry="4.3" fill="none" stroke="#3050c0" stroke-width="1"/><path d="M282.6 792.0L300.0 782.0M282.6 782.0L300.0 792.0" stroke="#3050c0" stroke-width="1"/>
<ellipse cx="651.0" cy="757.6" rx="6.6" ry="4.3" fill="none" stroke="#4a2a80" stroke-width="1"/><path d="M642.3 762.6L659.7 752.6M642.3 752.6L659.7 762.6" stroke="#4a2a80" stroke-width="1"/>
<ellipse cx="1286.9" cy="438.0" rx="6.6" ry="4.3" fill="none" stroke="#4a2a80" stroke-width="1"/><path d="M1278.2 443.0L1295.6 433.0M1278.2 433.0L1295.6 443.0" stroke="#4a2a80" stroke-width="1"/>
<ellipse cx="757.6" cy="516.6" rx="6.6" ry="4.3" fill="none" stroke="#999999" stroke-width="1"/><path d="M748.9 521.6L766.3 511.6M748.9 511.6L766.3 521.6" stroke="#999999" stroke-width="1"/>
<g font-family="Liberation Sans" font-size="9.4" fill="#505050" letter-spacing="1"><text transform="translate(284.8,638.9) rotate(-29.84)">29.0</text><text transform="translate(329.5,613.3) rotate(-29.84)">27.9</text><text transform="translate(374.2,587.6) rotate(-29.84)">35.6</text><text transform="translate(374.2,587.6) rotate(-29.84)" text-anchor="end" dx="-3" letter-spacing="0.3">max</text><text transform="translate(418.9,562.0) rotate(-29.84)">32.8</text><text transform="translate(463.6,536.3) rotate(-29.84)">26.8</text><text transform="translate(508.2,510.7) rotate(-29.84)">13.3</text><text transform="translate(552.9,485.1) rotate(-29.84)">4.6</text><text transform="translate(597.6,459.4) rotate(-29.84)">6.7</text><text transform="translate(642.3,433.8) rotate(-29.84)">6.9</text><text transform="translate(687.0,408.1) rotate(-29.84)">1.2</text><text transform="translate(731.7,382.5) rotate(-29.84)">10.5</text><text transform="translate(776.4,356.9) rotate(-29.84)">14.9</text><text transform="translate(821.1,331.2) rotate(-29.84)">12.3</text><text transform="translate(865.8,305.6) rotate(-29.84)">13.9</text><text transform="translate(910.5,279.9) rotate(-29.84)">15.2</text><text transform="translate(955.1,254.3) rotate(-29.84)">16.6</text><text transform="translate(999.8,228.7) rotate(-29.84)">13.4</text><text transform="translate(1044.5,203.0) rotate(-29.84)">12.1</text><text transform="translate(284.9,690.2) rotate(-29.84)">24.2</text><text transform="translate(329.6,664.6) rotate(-29.84)">19.8</text><text transform="translate(374.3,639.0) rotate(-29.84)">24.1</text><text transform="translate(419.0,613.3) rotate(-29.84)">28.0</text><text transform="translate(463.6,587.7) rotate(-29.84)">27.6</text><text transform="translate(508.3,562.0) rotate(-29.84)">20.7</text><text transform="translate(553.0,536.4) rotate(-29.84)">11.1</text><text transform="translate(597.7,510.8) rotate(-29.84)">2.4</text><text transform="translate(642.4,485.1) rotate(-29.84)">7.2</text><text transform="translate(642.4,485.1) rotate(-29.84)" text-anchor="end" dx="-3" letter-spacing="0.3">max</text><text transform="translate(687.1,459.5) rotate(-29.84)">6.6</text><text transform="translate(687.1,459.5) rotate(-29.84)" text-anchor="end" dx="-3" letter-spacing="0.3">max</text><text transform="translate(731.8,433.8) rotate(-29.84)">8.6</text><text transform="translate(776.5,408.2) rotate(-29.84)">9.3</text><text transform="translate(821.2,382.6) rotate(-29.84)">15.8</text><text transform="translate(865.9,356.9) rotate(-29.84)">10.3</text><text transform="translate(910.5,331.3) rotate(-29.84)">16.4</text><text transform="translate(955.2,305.6) rotate(-29.84)">13.1</text><text transform="translate(999.9,280.0) rotate(-29.84)">14.9</text><text transform="translate(1044.6,254.4) rotate(-29.84)">15.0</text><text transform="translate(1089.3,228.7) rotate(-29.84)">21.5</text><text transform="translate(285.0,741.6) rotate(-29.84)">20.5</text><text transform="translate(329.7,715.9) rotate(-29.84)">21.1</text><text transform="translate(374.4,690.3) rotate(-29.84)">21.0</text><text transform="translate(419.1,664.7) rotate(-29.84)">29.8</text><text transform="translate(463.7,639.0) rotate(-29.84)">25.8</text><text transform="translate(508.4,613.4) rotate(-29.84)">27.6</text><text transform="translate(553.1,587.7) rotate(-29.84)">19.2</text><text transform="translate(597.8,562.1) rotate(-29.84)">14.9</text><text transform="translate(642.5,536.5) rotate(-29.84)">2.5</text><text transform="translate(687.2,510.8) rotate(-29.84)">5.4</text><text transform="translate(731.9,485.2) rotate(-29.84)">6.5</text><text transform="translate(776.6,459.5) rotate(-29.84)">0.4</text><text transform="translate(821.3,433.9) rotate(-29.84)">0.7</text><text transform="translate(866.0,408.3) rotate(-29.84)">13.2</text><text transform="translate(910.6,382.6) rotate(-29.84)">10.1</text><text transform="translate(955.3,357.0) rotate(-29.84)">16.8</text><text transform="translate(1000.0,331.3) rotate(-29.84)">15.4</text><text transform="translate(1044.7,305.7) rotate(-29.84)">18.1</text><text transform="translate(1089.4,280.1) rotate(-29.84)">21.3</text><text transform="translate(1134.1,254.4) rotate(-29.84)">24.5</text><text transform="translate(329.8,767.3) rotate(-29.84)">19.4</text><text transform="translate(374.5,741.6) rotate(-29.84)">20.4</text><text transform="translate(419.1,716.0) rotate(-29.84)">24.1</text><text transform="translate(463.8,690.4) rotate(-29.84)">27.4</text><text transform="translate(508.5,664.7) rotate(-29.84)">25.7</text><text transform="translate(553.2,639.1) rotate(-29.84)">25.4</text><text transform="translate(597.9,613.4) rotate(-29.84)">23.3</text><text transform="translate(642.6,587.8) rotate(-29.84)">19.1</text><text transform="translate(687.3,562.2) rotate(-29.84)">13.1</text><text transform="translate(732.0,536.5) rotate(-29.84)">3.0</text><text transform="translate(776.7,510.9) rotate(-29.84)">1.2</text><text transform="translate(821.4,485.2) rotate(-29.84)">5.7</text><text transform="translate(866.0,459.6) rotate(-29.84)">14.4</text><text transform="translate(910.7,434.0) rotate(-29.84)">15.3</text><text transform="translate(955.4,408.3) rotate(-29.84)">24.5</text><text transform="translate(1000.1,382.7) rotate(-29.84)">17.4</text><text transform="translate(1044.8,357.0) rotate(-29.84)">13.3</text><text transform="translate(1089.5,331.4) rotate(-29.84)">20.2</text><text transform="translate(1134.2,305.8) rotate(-29.84)">25.0</text><text transform="translate(1134.2,305.8) rotate(-29.84)" text-anchor="end" dx="-3" letter-spacing="0.3">max</text><text transform="translate(1178.9,280.1) rotate(-29.84)">22.3</text><text transform="translate(374.5,793.0) rotate(-29.84)">18.7</text><text transform="translate(419.2,767.3) rotate(-29.84)">22.3</text><text transform="translate(463.9,741.7) rotate(-29.84)">23.8</text><text transform="translate(508.6,716.1) rotate(-29.84)">23.2</text><text transform="translate(553.3,690.4) rotate(-29.84)">24.6</text><text transform="translate(598.0,664.8) rotate(-29.84)">27.6</text><text transform="translate(642.7,639.1) rotate(-29.84)">24.4</text><text transform="translate(687.4,613.5) rotate(-29.84)">20.8</text><text transform="translate(732.1,587.9) rotate(-29.84)">8.1</text><text transform="translate(776.8,562.2) rotate(-29.84)">8.2</text><text transform="translate(821.4,536.6) rotate(-29.84)">6.2</text><text transform="translate(866.1,510.9) rotate(-29.84)">10.5</text><text transform="translate(910.8,485.3) rotate(-29.84)">12.5</text><text transform="translate(955.5,459.7) rotate(-29.84)">15.9</text><text transform="translate(1000.2,434.0) rotate(-29.84)">15.0</text><text transform="translate(1044.9,408.4) rotate(-29.84)">13.1</text><text transform="translate(1089.6,382.7) rotate(-29.84)">4.6</text><text transform="translate(1134.3,357.1) rotate(-29.84)">17.3</text><text transform="translate(1179.0,331.5) rotate(-29.84)">21.0</text><text transform="translate(1223.7,305.8) rotate(-29.84)">20.3</text><text transform="translate(464.0,793.0) rotate(-29.84)">21.4</text><text transform="translate(508.7,767.4) rotate(-29.84)">18.3</text><text transform="translate(553.4,741.8) rotate(-29.84)">18.3</text><text transform="translate(598.1,716.1) rotate(-29.84)">18.3</text><text transform="translate(642.8,690.5) rotate(-29.84)">22.2</text><text transform="translate(687.5,664.8) rotate(-29.84)">22.6</text><text transform="translate(732.1,639.2) rotate(-29.84)">15.2</text><text transform="translate(776.8,613.6) rotate(-29.84)">15.7</text><text transform="translate(821.5,587.9) rotate(-29.84)">5.5</text><text transform="translate(866.2,562.3) rotate(-29.84)">8.8</text><text transform="translate(910.9,536.6) rotate(-29.84)">4.3</text><text transform="translate(955.6,511.0) rotate(-29.84)">14.4</text><text transform="translate(1000.3,485.4) rotate(-29.84)">20.3</text><text transform="translate(1045.0,459.7) rotate(-29.84)">18.9</text><text transform="translate(1089.7,434.1) rotate(-29.84)">13.9</text><text transform="translate(1134.4,408.4) rotate(-29.84)">7.5</text><text transform="translate(1179.0,382.8) rotate(-29.84)">15.7</text><text transform="translate(1223.7,357.2) rotate(-29.84)">16.3</text><text transform="translate(1268.4,331.5) rotate(-29.84)">15.3</text><text transform="translate(553.5,793.1) rotate(-29.84)">12.8</text><text transform="translate(598.2,767.5) rotate(-29.84)">10.4</text><text transform="translate(642.9,741.8) rotate(-29.84)">15.5</text><text transform="translate(687.5,716.2) rotate(-29.84)">19.4</text><text transform="translate(732.2,690.5) rotate(-29.84)">18.6</text><text transform="translate(776.9,664.9) rotate(-29.84)">19.0</text><text transform="translate(821.6,639.3) rotate(-29.84)">15.4</text><text transform="translate(866.3,613.6) rotate(-29.84)">7.4</text><text transform="translate(911.0,588.0) rotate(-29.84)">2.8</text><text transform="translate(955.7,562.3) rotate(-29.84)">10.6</text><text transform="translate(1000.4,536.7) rotate(-29.84)">16.5</text><text transform="translate(1045.1,511.1) rotate(-29.84)">23.0</text><text transform="translate(1089.8,485.4) rotate(-29.84)">21.0</text><text transform="translate(1134.5,459.8) rotate(-29.84)">14.0</text><text transform="translate(1179.1,434.1) rotate(-29.84)">13.6</text><text transform="translate(1223.8,408.5) rotate(-29.84)">11.7</text><text transform="translate(1268.5,382.9) rotate(-29.84)">8.9</text><text transform="translate(1313.2,357.2) rotate(-29.84)">10.9</text></g>
</svg></div><!--/canvas-->
<div class="a" id="cmdbar"></div>
<div class="a" id="status"></div>
<!-- BOTTOM BARS -->
<div class="a otab" style="left:0;top:866px;width:68px;height:16px;background:linear-gradient(#fbc979,#f2ac48);clip-path:polygon(0 0,84% 0,100% 100%,0 100%);border-radius:3px 0 0 0">Befehlsfenster</div>
<div class="a" style="left:0;top:882px;width:1436px;height:1px;background:#5e5e5e"></div>
<div class="a" style="left:3px;top:885px;font-size:8.5px;line-height:12px;color:#3cb83c;white-space:nowrap">p1 Punkt 1...</div>
<div class="a" style="left:61px;top:885px;width:1px;height:12px;background:#2a2a2a;border-right:1px solid #555"></div>
<div class="a" style="left:205px;top:885px;font-size:8.5px;line-height:12px;color:#e4e4e4">0.000</div>
<div class="a" style="left:259px;top:886.5px;width:67px;height:8px;background:linear-gradient(#c8c8c8,#9a9a9a);border:1px solid #6a6a6a"></div>
<div class="a" style="left:337px;top:885px;font-size:8.5px;line-height:12px;color:#e4e4e4;white-space:nowrap;letter-spacing:-0.25px">22865.8751 , -743.5947 , 0.0000 (CCS)</div>
<svg class="a" style="left:1070px;top:883px" width="366" height="16" viewBox="1070 883 366 16">
<g stroke-width="1.2" fill="none">
<rect x="1074" y="886" width="10" height="10" stroke="#ddd"/><rect x="1076" y="888" width="6" height="6" stroke="#ddd"/>
<path d="M1091 887 l5 -2 l4 2 v6 l-4 2 l-5 -2z" fill="#f4f4f4" stroke="none"/><rect x="1097" y="893" width="3" height="3" fill="#d00a14" stroke="none"/>
<rect x="1109" y="886" width="10" height="10" fill="#d00a14" stroke="none"/>
<rect x="1127" y="885" width="10" height="11" stroke="#d00a14" stroke-width="0.8"/><circle cx="1132" cy="890" r="2.2" fill="#eee" stroke="none"/>
<circle cx="1151" cy="889" r="2" fill="#eee" stroke="none"/><path d="M1146 893 l3 2 M1153 893 l-2 3" stroke="#d00a14"/>
<circle cx="1169" cy="889" r="2" fill="#eee" stroke="none"/><path d="M1170 894 h4" stroke="#d00a14"/>
<circle cx="1187" cy="889" r="2" fill="#eee" stroke="none"/><path d="M1188 893 l3 2" stroke="#d00a14"/>
<path d="M1197 886 l6 6 M1196 896 h10" stroke="#eee"/><path d="M1199 891 l4 2" stroke="#d00a14" stroke-width="2"/>
</g>
<text x="1213" y="895" font-family="Liberation Sans" font-size="10" fill="#eee">2D</text>
<g stroke-width="1.4" fill="none">
<path d="M1232 896 l9 -10" stroke="#eee"/><rect x="1236" y="889" width="2" height="2" fill="#d00a14" stroke="none"/>
<path d="M1249 896 l9 -10" stroke="#eee"/><path d="M1252 893 l3 -3" stroke="#d00a14" stroke-width="2"/>
<circle cx="1272" cy="891" r="5" stroke="#eee"/><circle cx="1272" cy="891" r="0.8" fill="#d00a14" stroke="none"/>
<path d="M1284 894 h10" stroke="#eee"/><rect x="1288" y="893" width="3" height="2" fill="#d00a14" stroke="none"/>
<path d="M1301 891 h11" stroke="#eee"/><rect x="1305" y="890" width="3" height="2" fill="#d00a14" stroke="none"/>
<path d="M1319 896 l10 -10" stroke="#eee"/><rect x="1323" y="890" width="2" height="2" fill="#d00a14" stroke="none"/>
<path d="M1342 885 v12 M1336 891 h12" stroke="#eee" stroke-dasharray="3 2"/><rect x="1341" y="890" width="2" height="2" fill="#d00a14" stroke="none"/>
<path d="M1357 886 q7 0 8 8 h-8z" fill="#f4f4f4" stroke="none"/>
<path d="M1376 885 l8 9" stroke="#eee"/><path d="M1379 888 l3 3" stroke="#d00a14" stroke-width="2"/>
<path d="M1394 895 l7 -7 M1394 888 l7 7" stroke="#6a3030" stroke-width="0.8"/>
<path d="M1408 886 v10 M1412 886 v10" stroke="#ccc" stroke-width="1"/><rect x="1415" y="885" width="2.5" height="11" fill="#d00a14" stroke="none"/>
<path d="M1426 896 l6 -6 M1429 896 l4 -4" stroke="#666" stroke-width="0.8"/>
</g></svg>

</body></html>
